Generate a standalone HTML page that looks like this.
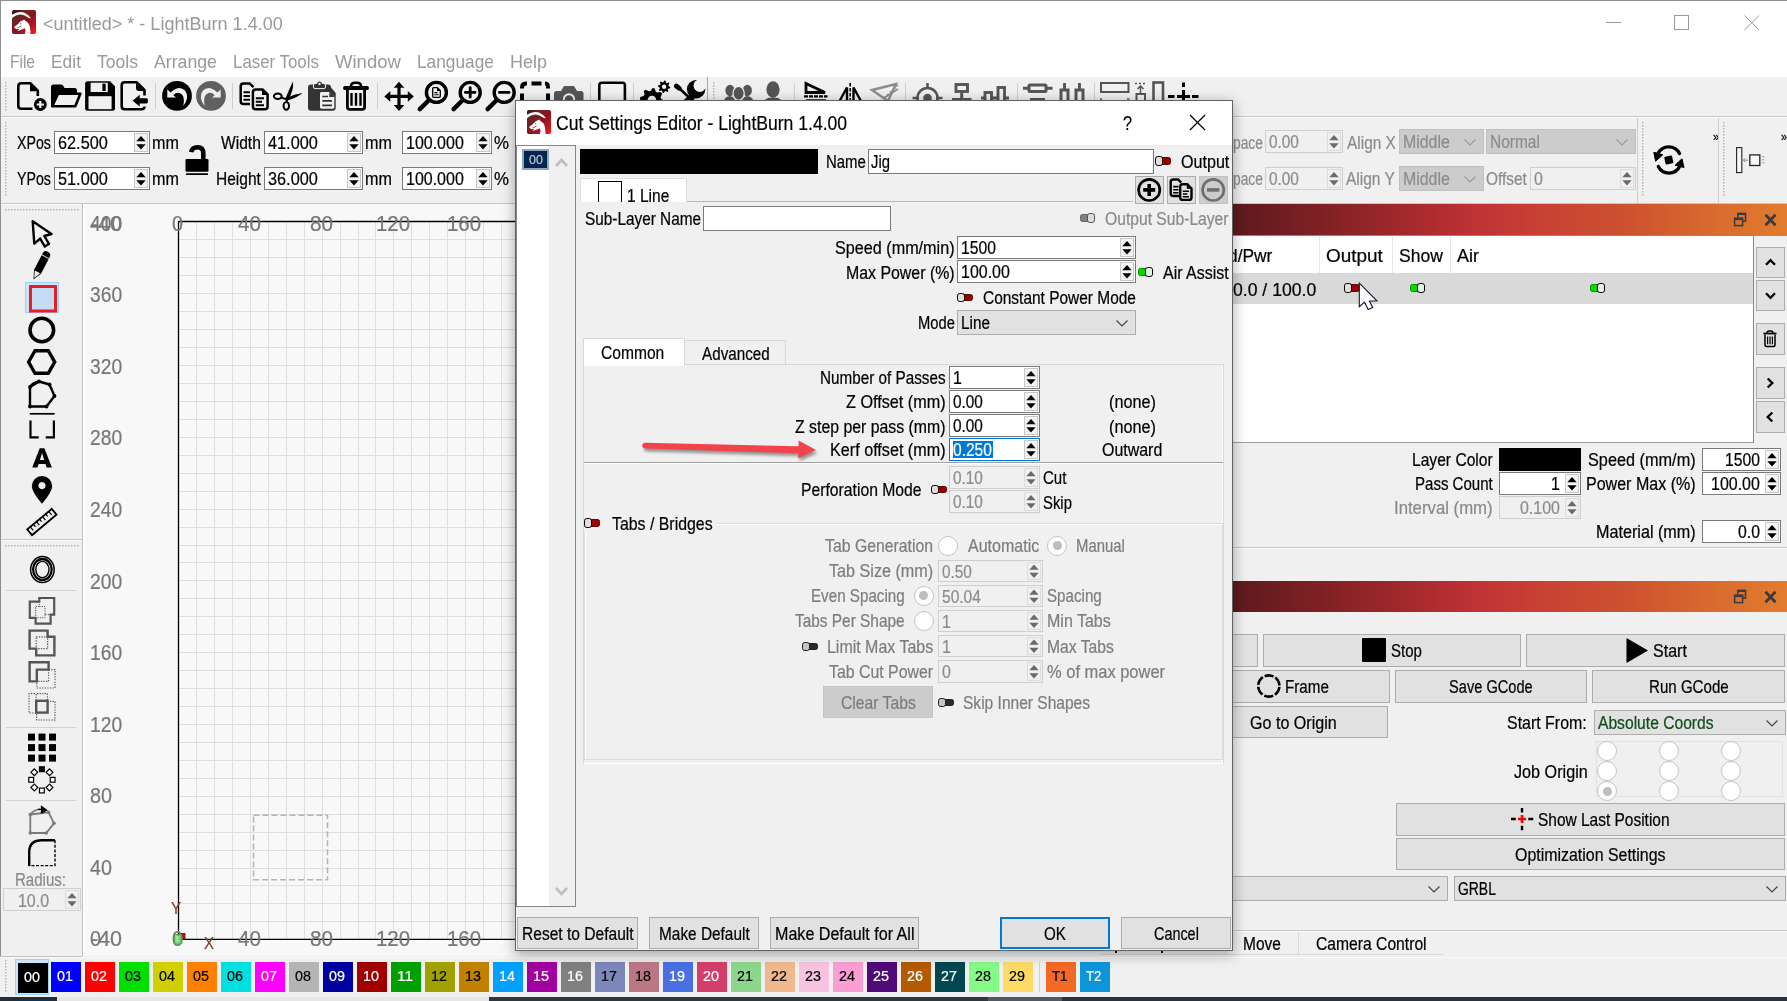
<!DOCTYPE html>
<html><head><meta charset="utf-8"><title>LightBurn</title>
<style>
html,body{margin:0;padding:0;}
body{width:1787px;height:1001px;overflow:hidden;background:#f0f0f0;position:relative;font-family:"Liberation Sans",sans-serif;}
#root{position:absolute;left:0;top:0;width:1787px;height:1001px;overflow:hidden;}
#root div,#root span,#root svg{position:absolute;}
.t{white-space:nowrap;transform-origin:0 50%;display:block;-webkit-text-stroke:0.22px currentColor;}
.a{overflow:visible;pointer-events:none;}
</style></head><body><div id="root">
<div style="left:0px;top:0px;width:1787px;height:77px;background:#fff;"></div>
<svg class="a" style="left:0;top:0" width="1787" height="1001" ><defs><linearGradient id="lg12_10" x1="0" y1="0" x2="1" y2="1"><stop offset="0" stop-color="#2c1212"/><stop offset="0.25" stop-color="#6a2426"/><stop offset="0.55" stop-color="#8c1420"/><stop offset="0.8" stop-color="#c4141f"/><stop offset="1" stop-color="#ff2028"/></linearGradient></defs><g transform="translate(12,10) scale(1.0)"><rect x="0" y="0" width="24" height="24" rx="1.8" fill="url(#lg12_10)"/><path d="M0,4.8 Q4,2 9,2.1 Q15,2.6 19,8.6 Q17,8.2 15.5,7.2 Q12,4.4 8,4.6 Q3,5 0,8.6 Z" fill="#fff"/><path d="M2,17 L6,14 L8.3,11.6 L12.3,9.4 L13.4,11 Q17,12.6 17.9,17 Q18.7,21 18.4,24 L12.8,24 Q14.2,21 13,18.3 L10,19.6 L5.2,21.2 L7.4,18.9 L4,19.2 Z" fill="#fff"/><path d="M5.5,18 L9.6,15.9" stroke="#8c1420" stroke-width="0.7"/><circle cx="8.7" cy="13.7" r="0.55" fill="#8c1420"/></g></svg>
<span class="t" style="left:43.0px;top:13.29px;font-size:17.99px;line-height:22px;color:#999999;transform:scaleX(1.0034);-webkit-text-stroke:0;">&lt;untitled&gt; * - LightBurn 1.4.00</span>
<svg class="a" style="left:0;top:0" width="1787" height="1001"><g stroke="#9a9a9a" stroke-width="1" fill="none"><line x1="1606" y1="22.5" x2="1621" y2="22.5"/><rect x="1674.5" y="15.5" width="14" height="14"/><line x1="1744.5" y1="15.5" x2="1759" y2="30"/><line x1="1759" y1="15.5" x2="1744.5" y2="30"/></g></svg>
<span class="t" style="left:10.0px;top:50.59px;font-size:17.99px;line-height:22px;color:#9a9a9a;transform:scaleX(0.8618);-webkit-text-stroke:0;">File</span>
<span class="t" style="left:51.0px;top:50.59px;font-size:17.99px;line-height:22px;color:#9a9a9a;transform:scaleX(0.9671);-webkit-text-stroke:0;">Edit</span>
<span class="t" style="left:97.0px;top:50.59px;font-size:17.99px;line-height:22px;color:#9a9a9a;transform:scaleX(0.9756);-webkit-text-stroke:0;">Tools</span>
<span class="t" style="left:154.0px;top:50.59px;font-size:17.99px;line-height:22px;color:#9a9a9a;transform:scaleX(0.9837);-webkit-text-stroke:0;">Arrange</span>
<span class="t" style="left:233.0px;top:50.59px;font-size:17.99px;line-height:22px;color:#9a9a9a;transform:scaleX(0.9375);-webkit-text-stroke:0;">Laser Tools</span>
<span class="t" style="left:335.0px;top:50.59px;font-size:17.99px;line-height:22px;color:#9a9a9a;transform:scaleX(1.0309);-webkit-text-stroke:0;">Window</span>
<span class="t" style="left:417.0px;top:50.59px;font-size:17.99px;line-height:22px;color:#9a9a9a;transform:scaleX(0.9614);-webkit-text-stroke:0;">Language</span>
<span class="t" style="left:510.0px;top:50.59px;font-size:17.99px;line-height:22px;color:#9a9a9a;transform:scaleX(0.9994);-webkit-text-stroke:0;">Help</span>
<div style="left:0px;top:77px;width:1787px;height:39px;background:#f0f0f0;"></div>
<div style="left:0px;top:116px;width:1787px;height:1px;background:#c6c6c6;"></div>
<div style="left:0px;top:117px;width:1787px;height:1px;background:#fbfbfb;"></div>
<div style="left:0px;top:203px;width:1787px;height:1px;background:#c6c6c6;"></div>
<div style="left:0px;top:204px;width:1787px;height:1px;background:#fbfbfb;"></div>
<svg class="a" style="left:0;top:0" width="1787" height="1001" ><rect x="5" y="82" width="1.5" height="1.5" fill="#b5b5b5"/><rect x="5" y="85" width="1.5" height="1.5" fill="#b5b5b5"/><rect x="5" y="88" width="1.5" height="1.5" fill="#b5b5b5"/><rect x="5" y="91" width="1.5" height="1.5" fill="#b5b5b5"/><rect x="5" y="94" width="1.5" height="1.5" fill="#b5b5b5"/><rect x="5" y="97" width="1.5" height="1.5" fill="#b5b5b5"/><rect x="5" y="100" width="1.5" height="1.5" fill="#b5b5b5"/><rect x="5" y="103" width="1.5" height="1.5" fill="#b5b5b5"/><rect x="5" y="106" width="1.5" height="1.5" fill="#b5b5b5"/><rect x="5" y="109" width="1.5" height="1.5" fill="#b5b5b5"/></svg>
<svg class="a" style="left:0;top:0" width="1787" height="1001" ><rect x="5" y="122" width="1.5" height="1.5" fill="#b5b5b5"/><rect x="5" y="125" width="1.5" height="1.5" fill="#b5b5b5"/><rect x="5" y="128" width="1.5" height="1.5" fill="#b5b5b5"/><rect x="5" y="131" width="1.5" height="1.5" fill="#b5b5b5"/><rect x="5" y="134" width="1.5" height="1.5" fill="#b5b5b5"/><rect x="5" y="137" width="1.5" height="1.5" fill="#b5b5b5"/><rect x="5" y="140" width="1.5" height="1.5" fill="#b5b5b5"/><rect x="5" y="143" width="1.5" height="1.5" fill="#b5b5b5"/><rect x="5" y="146" width="1.5" height="1.5" fill="#b5b5b5"/><rect x="5" y="149" width="1.5" height="1.5" fill="#b5b5b5"/><rect x="5" y="152" width="1.5" height="1.5" fill="#b5b5b5"/><rect x="5" y="155" width="1.5" height="1.5" fill="#b5b5b5"/><rect x="5" y="158" width="1.5" height="1.5" fill="#b5b5b5"/><rect x="5" y="161" width="1.5" height="1.5" fill="#b5b5b5"/><rect x="5" y="164" width="1.5" height="1.5" fill="#b5b5b5"/><rect x="5" y="167" width="1.5" height="1.5" fill="#b5b5b5"/><rect x="5" y="170" width="1.5" height="1.5" fill="#b5b5b5"/><rect x="5" y="173" width="1.5" height="1.5" fill="#b5b5b5"/><rect x="5" y="176" width="1.5" height="1.5" fill="#b5b5b5"/><rect x="5" y="179" width="1.5" height="1.5" fill="#b5b5b5"/><rect x="5" y="182" width="1.5" height="1.5" fill="#b5b5b5"/><rect x="5" y="185" width="1.5" height="1.5" fill="#b5b5b5"/><rect x="5" y="188" width="1.5" height="1.5" fill="#b5b5b5"/><rect x="5" y="191" width="1.5" height="1.5" fill="#b5b5b5"/><rect x="5" y="194" width="1.5" height="1.5" fill="#b5b5b5"/></svg>
<svg class="a" style="left:0;top:0" width="1787" height="1001" ><rect x="713" y="82" width="1.5" height="1.5" fill="#b5b5b5"/><rect x="713" y="85" width="1.5" height="1.5" fill="#b5b5b5"/><rect x="713" y="88" width="1.5" height="1.5" fill="#b5b5b5"/><rect x="713" y="91" width="1.5" height="1.5" fill="#b5b5b5"/><rect x="713" y="94" width="1.5" height="1.5" fill="#b5b5b5"/><rect x="713" y="97" width="1.5" height="1.5" fill="#b5b5b5"/><rect x="713" y="100" width="1.5" height="1.5" fill="#b5b5b5"/><rect x="713" y="103" width="1.5" height="1.5" fill="#b5b5b5"/><rect x="713" y="106" width="1.5" height="1.5" fill="#b5b5b5"/><rect x="713" y="109" width="1.5" height="1.5" fill="#b5b5b5"/></svg>
<svg class="a" style="left:0;top:0" width="1787" height="1001" ><path d="M32.5,108.7 H21.3 Q18.3,108.7 18.3,105.7 V86.3 Q18.3,83.3 21.3,83.3 H30.5 L37.8,90.6 V96" fill="none" stroke="#000" stroke-width="2.6" stroke-linejoin="round"/><path d="M30,83 L38.3,91.3 H30 Z" fill="#000"/><circle cx="40.3" cy="104.5" r="6.4" fill="#000"/><path d="M36.7,104.5 H43.9 M40.3,100.9 V108.1" stroke="#f0f0f0" stroke-width="2.2"/><path d="M51,87 Q51,84.5 53.5,84.5 H61 Q62.8,84.5 63.6,86.2 L64.5,88 H74.5 Q77,88 77,90.5 V94 H58 L52.5,106 H51 Z" fill="#000"/><path d="M58,93.7 H80.3 L75.3,106.3 H52.3 Z" fill="#f0f0f0" stroke="#000" stroke-width="2.6" stroke-linejoin="round"/><path d="M87.6,81.2 H110 L115,86.2 V108.3 Q115,110.8 112.5,110.8 H87.6 Q85.1,110.8 85.1,108.3 V83.7 Q85.1,81.2 87.6,81.2 Z" fill="#000"/><rect x="90.6" y="82.7" width="17.2" height="9.3" fill="#f0f0f0"/><rect x="102.4" y="83.6" width="3.3" height="7.4" fill="#000"/><rect x="88.5" y="96.2" width="23.1" height="13" fill="#f0f0f0"/><path d="M144.5,106.5 Q144.5,109.3 141.5,109.3 H124.7 Q121.7,109.3 121.7,106.3 V85.3 Q121.7,82.3 124.7,82.3 H136.5 L144.5,90 V95.5" fill="none" stroke="#000" stroke-width="2.6" stroke-linejoin="round"/><path d="M136,82 L145.3,91 H139 Q136,91 136,88 Z" fill="#000"/><path d="M132.6,100.8 L139.7,94.8 V98.2 H146.5 Q147.9,98.2 147.9,99.6 V102 Q147.9,103.4 146.5,103.4 H139.7 V106.6 Z" fill="#000"/><circle cx="177" cy="95.9" r="14.9" fill="#000"/><path d="M167.3,89.6 V97.6 H176 L173.3,95.3 Q176,92.3 179.5,93 Q185.5,94.5 183.3,106 Q190,97 185,90.5 Q179,84.5 170.6,92.6 Z" fill="#f0f0f0"/><circle cx="211" cy="95.9" r="14.9" fill="#606060"/><path d="M220.7,89.6 V97.6 H212 L214.7,95.3 Q212,92.3 208.5,93 Q202.5,94.5 204.7,106 Q198,97 203,90.5 Q209,84.5 217.4,92.6 Z" fill="#ededed"/><path d="M250,104 H243.5 Q240.7,104 240.7,101.2 V86.2 Q240.7,83.4 243.5,83.4 H249.5 L253.5,87.2" fill="none" stroke="#000" stroke-width="2.5" stroke-linejoin="round"/><path d="M243.5,92.2 H250 M243.5,96 H250 M243.5,99.8 H250" stroke="#000" stroke-width="1.9"/><path d="M255.7,89.4 H262.5 L267.6,94.4 V106.4 Q267.6,109.2 264.8,109.2 H255.7 Q252.9,109.2 252.9,106.4 V92.2 Q252.9,89.4 255.7,89.4 Z" fill="#f0f0f0" stroke="#000" stroke-width="2.5" stroke-linejoin="round"/><path d="M262,89 L268,95 H262 Z" fill="#000"/><path d="M255.8,98.3 H264 M255.8,101.8 H262 M255.8,105.3 H264" stroke="#000" stroke-width="1.9"/><path d="M285,99.5 Q289,90 292.8,81.6 Q294.5,90 287.8,100.5 Z" fill="#000"/><path d="M286,98.3 Q294,94 302.8,93 Q297,97.5 287.5,100.5 Z" fill="#000"/><ellipse cx="277.8" cy="96.3" rx="3.9" ry="2.7" fill="none" stroke="#000" stroke-width="2"/><ellipse cx="286.3" cy="105.9" rx="2.7" ry="3.9" fill="none" stroke="#000" stroke-width="2"/><path d="M281,97.5 L286.5,99.3 L286.8,102" fill="none" stroke="#000" stroke-width="2"/><path d="M311,84.4 H328 Q331,84.4 331,87.4 L335.7,93 V107.8 Q335.7,110.8 332.7,110.8 H311 Q308,110.8 308,107.8 V87.4 Q308,84.4 311,84.4 Z" fill="#333"/><path d="M313.5,85 Q313.5,83.5 315,83.5 H316.6 Q317,81 319.5,81 Q322,81 322.4,83.5 H324 Q325.5,83.5 325.5,85 V87 Q325.5,88.6 324,88.6 H315 Q313.5,88.6 313.5,87 Z" fill="#333" stroke="#f0f0f0" stroke-width="1"/><circle cx="319.5" cy="83.9" r="1.2" fill="#f0f0f0"/><path d="M321.5,92 H329.5 L334.3,96.8 V107.3 Q334.3,108.7 332.9,108.7 H321.5 Q320,108.7 320,107.3 V93.4 Q320,92 321.5,92 Z" fill="#f0f0f0"/><path d="M329.3,91.8 L334.5,97 H329.3 Z" fill="#333"/><path d="M322.3,96.5 H328 M322.3,100.9 H332 M322.3,105.3 H332" stroke="#333" stroke-width="1.7"/><path d="M350.8,86.5 Q351,82.7 355,82.7 H357 Q361,82.7 361.2,86.5" fill="none" stroke="#000" stroke-width="2.5"/><rect x="343.2" y="86" width="25.6" height="4" rx="1.5" fill="#000"/><path d="M347.4,90 V107 Q347.4,109.4 349.8,109.4 H362.2 Q364.6,109.4 364.6,107 V90" fill="none" stroke="#000" stroke-width="2.8"/><path d="M351.5,93 V105.8 M356,93 V105.8 M360.5,93 V105.8" stroke="#000" stroke-width="2.4"/><path d="M399,84 V109 M386.5,96.4 H411.5" stroke="#000" stroke-width="3.2"/><path d="M399,81.8 L404.3,87.8 H393.7 Z M399,111 L404.3,105 H393.7 Z M384.3,96.4 L390.3,91.1 V101.7 Z M413.8,96.4 L407.8,91.1 V101.7 Z" fill="#000"/><circle cx="436.4" cy="92.4" r="10" fill="none" stroke="#000" stroke-width="3.4"/><path d="M428.79999999999995,100.2 L419.79999999999995,109.10000000000001" stroke="#000" stroke-width="4.4" stroke-linecap="round"/><circle cx="470.2" cy="92.4" r="10" fill="none" stroke="#000" stroke-width="3.4"/><path d="M462.59999999999997,100.2 L453.59999999999997,109.10000000000001" stroke="#000" stroke-width="4.4" stroke-linecap="round"/><circle cx="504.2" cy="92.4" r="10" fill="none" stroke="#000" stroke-width="3.4"/><path d="M496.59999999999997,100.2 L487.59999999999997,109.10000000000001" stroke="#000" stroke-width="4.4" stroke-linecap="round"/><path d="M433.7,87.6 H437.3 L440.3,90.6 V96.3 Q440.3,97.3 439.3,97.3 H433.7 Q432.7,97.3 432.7,96.3 V88.6 Q432.7,87.6 433.7,87.6 Z" fill="none" stroke="#000" stroke-width="1.3"/><path d="M437,87.3 L440.6,90.9 H437 Z" fill="#000"/><path d="M434.3,92.6 H437.5 M434.3,94.8 H438.7" stroke="#000" stroke-width="1.1"/><path d="M465.4,92.4 H475 M470.2,87.6 V97.2" stroke="#000" stroke-width="2.8" stroke-linecap="round"/><path d="M499.4,92.4 H509" stroke="#000" stroke-width="2.8" stroke-linecap="round"/><path d="M522,88.5 V87.5 Q522,83.5 526,83.5 H527 M531.5,83.5 H541.5 M545,83.5 H545.5 Q548,83.5 548,87.5 V88.5 M522,93.5 V104 M548,93.5 V104" fill="none" stroke="#000" stroke-width="4"/><path d="M556.5,91 H561 L564,86 H574 L577,91 H581 Q583.5,91 583.5,93.5 V108 H554 V93.5 Q554,91 556.5,91 Z" fill="#555"/><circle cx="569" cy="99.5" r="5.2" fill="#555" stroke="#f0f0f0" stroke-width="2"/><rect x="599.3" y="82.8" width="25.6" height="24" rx="2.5" fill="none" stroke="#000" stroke-width="2.6"/><polygon points="663.9,100.6 663.5,102.9 660.2,103.9 659.3,105.5 660.0,108.9 658.1,110.3 655.0,108.7 653.2,109.1 651.3,112.0 649.0,111.6 648.0,108.3 646.4,107.4 643.0,108.1 641.6,106.2 643.2,103.1 642.8,101.3 639.9,99.4 640.3,97.1 643.6,96.1 644.5,94.5 643.8,91.1 645.7,89.7 648.8,91.3 650.6,90.9 652.5,88.0 654.8,88.4 655.8,91.7 657.4,92.6 660.8,91.9 662.2,93.8 660.6,96.9 661.0,98.7" fill="#000"/><circle cx="651.9" cy="100" r="4.3" fill="#f0f0f0"/><polygon points="670.3,87.1 670.1,88.3 668.2,88.7 667.7,89.5 668.3,91.4 667.3,92.1 665.6,91.0 664.8,91.3 663.8,93.0 662.6,92.8 662.2,90.9 661.4,90.4 659.5,91.0 658.8,90.0 659.9,88.3 659.6,87.5 657.9,86.5 658.1,85.3 660.0,84.9 660.5,84.1 659.9,82.2 660.9,81.5 662.6,82.6 663.4,82.3 664.4,80.6 665.6,80.8 666.0,82.7 666.8,83.2 668.7,82.6 669.4,83.6 668.3,85.3 668.6,86.1" fill="#000"/><circle cx="664.1" cy="86.8" r="2.2" fill="#f0f0f0"/><path d="M676.3,86 L679.3,88.3" stroke="#000" stroke-width="4.8" stroke-linecap="round"/><path d="M679,88 L696,104" stroke="#000" stroke-width="2.6"/><circle cx="696.1" cy="89.3" r="9.2" fill="#000"/><circle cx="699.8" cy="85.6" r="6.3" fill="#f2f2f2"/><path d="M692.5,96.5 L680,108" stroke="#000" stroke-width="6.5"/><ellipse cx="730" cy="90.5" rx="4.6" ry="5.8" fill="#555"/><ellipse cx="747.3" cy="90.5" rx="4.6" ry="5.8" fill="#555"/><path d="M723.2,104 Q723.5,96.5 730,96 Q735,96.5 736,104 Z M741,104 Q742,96.5 747.3,96 Q753.5,96.5 754,104 Z" fill="#555"/><ellipse cx="738.6" cy="93.3" rx="5.6" ry="7" fill="#555" stroke="#f0f0f0" stroke-width="1.3"/><path d="M729.5,106 Q730.5,100 738.6,100 Q746.5,100 747.7,106 Z" fill="#555"/><ellipse cx="773" cy="89.5" rx="6.6" ry="8.2" fill="#555"/><path d="M762,106 Q763,97 773,97.5 Q783,97 784,106 Z" fill="#555"/><path d="M806,83.5 L825,92.5 H806 Z" fill="none" stroke="#000" stroke-width="2.8" stroke-linejoin="miter"/><path d="M804,96.3 H827.5" stroke="#000" stroke-width="2.2" stroke-dasharray="4,1"/><path d="M806,100.5 H826" stroke="#000" stroke-width="2.4"/><path d="M847,87.5 V103 H838.5 Z" fill="none" stroke="#000" stroke-width="2.4"/><path d="M853.5,87.5 V103 H862 Z" fill="none" stroke="#000" stroke-width="2.4"/><path d="M850.2,83 V103" stroke="#000" stroke-width="1.6" stroke-dasharray="3.5,1.5"/><path d="M872,90 L896,84 L888,101 Z" fill="none" stroke="#8c8c8c" stroke-width="2.4"/><path d="M880,102 L898,85" stroke="#8c8c8c" stroke-width="1.5" stroke-dasharray="3,1.5"/><path d="M884,98 L898,89" stroke="#8c8c8c" stroke-width="1.5"/><circle cx="927.5" cy="98" r="10" fill="none" stroke="#555" stroke-width="2.6"/><circle cx="927.5" cy="98" r="4.3" fill="#555"/><path d="M927.5,83 V89 M912.5,98 H918.5 M936.5,98 H942.5" stroke="#555" stroke-width="2.6"/><rect x="956" y="84.5" width="11.5" height="7" fill="none" stroke="#555" stroke-width="2.9"/><path d="M961.7,92 V99 M952,99.5 H971.5" stroke="#555" stroke-width="3"/><rect x="985" y="92.5" width="6.5" height="10" fill="none" stroke="#555" stroke-width="2.9"/><rect x="998" y="87.5" width="6.5" height="15" fill="none" stroke="#555" stroke-width="2.9"/><path d="M981,98 H985 M991.5,98 H998 M1004.5,98 H1009" stroke="#555" stroke-width="2.9"/><rect x="1029" y="85" width="17" height="6.5" rx="1" fill="none" stroke="#555" stroke-width="3"/><path d="M1023,88.3 H1029 M1046,88.3 H1052.5" stroke="#555" stroke-width="2.9"/><path d="M1030,99.5 H1045" stroke="#555" stroke-width="3"/><rect x="1061" y="90" width="7" height="12" fill="none" stroke="#555" stroke-width="3"/><rect x="1076" y="90" width="7" height="12" fill="none" stroke="#555" stroke-width="3"/><path d="M1064.5,83 V90 M1079.5,83 V90" stroke="#555" stroke-width="2.9"/><rect x="1101" y="83" width="27.5" height="9" fill="none" stroke="#555" stroke-width="2"/><path d="M1100,99 H1102 M1127,99 H1129.5" stroke="#555" stroke-width="1.6"/><path d="M1135,83.5 H1146" stroke="#555" stroke-width="1.4" stroke-dasharray="2,2"/><path d="M1140.5,86 V93 M1137.5,89 L1140.5,86 L1143.5,89" fill="none" stroke="#555" stroke-width="1.5"/><rect x="1136.5" y="94" width="8.5" height="7" fill="none" stroke="#555" stroke-width="2"/><rect x="1153.5" y="82.5" width="9.5" height="20" fill="none" stroke="#555" stroke-width="2.6"/><path d="M1168,96.5 H1174.5 M1177,96.5 H1190 M1192,96.5 H1198.5 M1183.5,82.5 V87 M1183.5,90 V102" stroke="#000" stroke-width="3"/></svg>
<div style="left:155px;top:83px;width:1px;height:26px;background:#cfcfcf;"></div>
<div style="left:232px;top:83px;width:1px;height:26px;background:#cfcfcf;"></div>
<div style="left:377px;top:83px;width:1px;height:26px;background:#cfcfcf;"></div>
<div style="left:590px;top:83px;width:1px;height:26px;background:#cfcfcf;"></div>
<div style="left:633px;top:83px;width:1px;height:26px;background:#cfcfcf;"></div>
<div style="left:794px;top:83px;width:1px;height:26px;background:#cfcfcf;"></div>
<div style="left:905px;top:83px;width:1px;height:26px;background:#cfcfcf;"></div>
<div style="left:1017px;top:83px;width:1px;height:26px;background:#cfcfcf;"></div>
<div style="left:1094px;top:83px;width:1px;height:26px;background:#cfcfcf;"></div>
<div style="left:707px;top:77px;width:1px;height:39px;background:#a8a8a8;"></div>
<span class="t" style="left:17.0px;top:132.30px;font-size:17.44px;line-height:22px;color:#000;transform:scaleX(0.8129);">XPos</span>
<div style="left:54px;top:131px;width:96px;height:23px;background:#fff;border:1px solid #7a7a7a;box-sizing:border-box;"></div>
<div style="left:134px;top:133px;width:14px;height:19px;background:#f3f3f3;border:1px solid #c8c8c8;box-sizing:border-box;"></div>
<svg class="a" style="left:0;top:0" width="1787" height="1001"><polygon points="136.3,141.2 145.7,141.2 141.0,135.89999999999998" fill="#000"/><polygon points="136.3,144.2 145.7,144.2 141.0,149.5" fill="#000"/></svg>
<span class="t" style="left:58.0px;top:132.30px;font-size:17.44px;line-height:22px;color:#000;transform:scaleX(0.9340);">62.500</span>
<span class="t" style="left:152.0px;top:132.30px;font-size:17.44px;line-height:22px;color:#000;transform:scaleX(0.9260);">mm</span>
<span class="t" style="left:17.0px;top:168.30px;font-size:17.44px;line-height:22px;color:#000;transform:scaleX(0.8129);">YPos</span>
<div style="left:54px;top:167px;width:96px;height:23px;background:#fff;border:1px solid #7a7a7a;box-sizing:border-box;"></div>
<div style="left:134px;top:169px;width:14px;height:19px;background:#f3f3f3;border:1px solid #c8c8c8;box-sizing:border-box;"></div>
<svg class="a" style="left:0;top:0" width="1787" height="1001"><polygon points="136.3,177.2 145.7,177.2 141.0,171.89999999999998" fill="#000"/><polygon points="136.3,180.2 145.7,180.2 141.0,185.5" fill="#000"/></svg>
<span class="t" style="left:58.0px;top:168.30px;font-size:17.44px;line-height:22px;color:#000;transform:scaleX(0.9340);">51.000</span>
<span class="t" style="left:152.0px;top:168.30px;font-size:17.44px;line-height:22px;color:#000;transform:scaleX(0.9260);">mm</span>
<svg class="a" style="left:0;top:0" width="1787" height="1001" ><rect x="185.5" y="159" width="23" height="12.7" rx="1.2" fill="#000"/><rect x="186" y="173.3" width="22" height="1.7" rx="0.6" fill="#000"/><path d="M191.2,152.2 Q192,147.3 197.5,147.3 Q203.3,147.3 203.3,153.3 V160" fill="none" stroke="#000" stroke-width="4.6"/></svg>
<span class="t" style="left:221.0px;top:132.30px;font-size:17.44px;line-height:22px;color:#000;transform:scaleX(0.8942);">Width</span>
<div style="left:264px;top:131px;width:99px;height:23px;background:#fff;border:1px solid #7a7a7a;box-sizing:border-box;"></div>
<div style="left:347px;top:133px;width:14px;height:19px;background:#f3f3f3;border:1px solid #c8c8c8;box-sizing:border-box;"></div>
<svg class="a" style="left:0;top:0" width="1787" height="1001"><polygon points="349.3,141.2 358.7,141.2 354.0,135.89999999999998" fill="#000"/><polygon points="349.3,144.2 358.7,144.2 354.0,149.5" fill="#000"/></svg>
<span class="t" style="left:268.0px;top:132.30px;font-size:17.44px;line-height:22px;color:#000;transform:scaleX(0.9340);">41.000</span>
<span class="t" style="left:365.0px;top:132.30px;font-size:17.44px;line-height:22px;color:#000;transform:scaleX(0.9260);">mm</span>
<div style="left:402px;top:131px;width:90px;height:23px;background:#fff;border:1px solid #7a7a7a;box-sizing:border-box;"></div>
<div style="left:476px;top:133px;width:14px;height:19px;background:#f3f3f3;border:1px solid #c8c8c8;box-sizing:border-box;"></div>
<svg class="a" style="left:0;top:0" width="1787" height="1001"><polygon points="478.3,141.2 487.7,141.2 483.0,135.89999999999998" fill="#000"/><polygon points="478.3,144.2 487.7,144.2 483.0,149.5" fill="#000"/></svg>
<span class="t" style="left:406.0px;top:132.30px;font-size:17.44px;line-height:22px;color:#000;transform:scaleX(0.9167);">100.000</span>
<span class="t" style="left:494.0px;top:132.30px;font-size:17.44px;line-height:22px;color:#000;transform:scaleX(0.9641);">%</span>
<span class="t" style="left:216.0px;top:168.30px;font-size:17.44px;line-height:22px;color:#000;transform:scaleX(0.8895);">Height</span>
<div style="left:264px;top:167px;width:99px;height:23px;background:#fff;border:1px solid #7a7a7a;box-sizing:border-box;"></div>
<div style="left:347px;top:169px;width:14px;height:19px;background:#f3f3f3;border:1px solid #c8c8c8;box-sizing:border-box;"></div>
<svg class="a" style="left:0;top:0" width="1787" height="1001"><polygon points="349.3,177.2 358.7,177.2 354.0,171.89999999999998" fill="#000"/><polygon points="349.3,180.2 358.7,180.2 354.0,185.5" fill="#000"/></svg>
<span class="t" style="left:268.0px;top:168.30px;font-size:17.44px;line-height:22px;color:#000;transform:scaleX(0.9340);">36.000</span>
<span class="t" style="left:365.0px;top:168.30px;font-size:17.44px;line-height:22px;color:#000;transform:scaleX(0.9260);">mm</span>
<div style="left:402px;top:167px;width:90px;height:23px;background:#fff;border:1px solid #7a7a7a;box-sizing:border-box;"></div>
<div style="left:476px;top:169px;width:14px;height:19px;background:#f3f3f3;border:1px solid #c8c8c8;box-sizing:border-box;"></div>
<svg class="a" style="left:0;top:0" width="1787" height="1001"><polygon points="478.3,177.2 487.7,177.2 483.0,171.89999999999998" fill="#000"/><polygon points="478.3,180.2 487.7,180.2 483.0,185.5" fill="#000"/></svg>
<span class="t" style="left:406.0px;top:168.30px;font-size:17.44px;line-height:22px;color:#000;transform:scaleX(0.9167);">100.000</span>
<span class="t" style="left:494.0px;top:168.30px;font-size:17.44px;line-height:22px;color:#000;transform:scaleX(0.9641);">%</span>
<span class="t" style="left:1232.5px;top:132.30px;font-size:17.44px;line-height:22px;color:#8c8c8c;transform:scaleX(0.7904);">pace</span>
<div style="left:1265px;top:130px;width:78px;height:23px;background:#f0f0f0;border:1px solid #cfcfcf;box-sizing:border-box;"></div>
<div style="left:1327px;top:132px;width:14px;height:19px;background:#f0f0f0;border:1px solid #dcdcdc;box-sizing:border-box;"></div>
<svg class="a" style="left:0;top:0" width="1787" height="1001"><polygon points="1329.3,140.2 1338.7,140.2 1334.0,134.89999999999998" fill="#6a6a6a"/><polygon points="1329.3,143.2 1338.7,143.2 1334.0,148.5" fill="#6a6a6a"/></svg>
<span class="t" style="left:1269.0px;top:131.30px;font-size:17.44px;line-height:22px;color:#8c8c8c;transform:scaleX(0.8806);">0.00</span>
<span class="t" style="left:1347.0px;top:132.30px;font-size:17.44px;line-height:22px;color:#8c8c8c;transform:scaleX(0.8837);">Align X</span>
<div style="left:1399px;top:129px;width:85px;height:25px;background:#cccccc;border:1px solid #c0c0c0;box-sizing:border-box;"></div>
<span class="t" style="left:1403.0px;top:131.30px;font-size:17.44px;line-height:22px;color:#8c8c8c;transform:scaleX(0.9117);">Middle</span>
<svg class="a" style="left:1463px;top:136.5px" width="14" height="10"><polyline points="1.5,2.5 7,8 12.5,2.5" fill="none" stroke="#9a9a9a" stroke-width="1.2"/></svg>
<div style="left:1486px;top:129px;width:150px;height:25px;background:#cccccc;border:1px solid #c0c0c0;box-sizing:border-box;"></div>
<span class="t" style="left:1490.0px;top:131.30px;font-size:17.44px;line-height:22px;color:#8c8c8c;transform:scaleX(0.8865);">Normal</span>
<svg class="a" style="left:1615px;top:136.5px" width="14" height="10"><polyline points="1.5,2.5 7,8 12.5,2.5" fill="none" stroke="#9a9a9a" stroke-width="1.2"/></svg>
<span class="t" style="left:1232.5px;top:168.30px;font-size:17.44px;line-height:22px;color:#8c8c8c;transform:scaleX(0.7904);">pace</span>
<div style="left:1265px;top:167px;width:78px;height:23px;background:#f0f0f0;border:1px solid #cfcfcf;box-sizing:border-box;"></div>
<div style="left:1327px;top:169px;width:14px;height:19px;background:#f0f0f0;border:1px solid #dcdcdc;box-sizing:border-box;"></div>
<svg class="a" style="left:0;top:0" width="1787" height="1001"><polygon points="1329.3,177.2 1338.7,177.2 1334.0,171.89999999999998" fill="#6a6a6a"/><polygon points="1329.3,180.2 1338.7,180.2 1334.0,185.5" fill="#6a6a6a"/></svg>
<span class="t" style="left:1269.0px;top:168.30px;font-size:17.44px;line-height:22px;color:#8c8c8c;transform:scaleX(0.8806);">0.00</span>
<span class="t" style="left:1346.0px;top:168.30px;font-size:17.44px;line-height:22px;color:#8c8c8c;transform:scaleX(0.8888);">Align Y</span>
<div style="left:1399px;top:166px;width:85px;height:25px;background:#cccccc;border:1px solid #c0c0c0;box-sizing:border-box;"></div>
<span class="t" style="left:1403.0px;top:168.30px;font-size:17.44px;line-height:22px;color:#8c8c8c;transform:scaleX(0.9117);">Middle</span>
<svg class="a" style="left:1463px;top:173.5px" width="14" height="10"><polyline points="1.5,2.5 7,8 12.5,2.5" fill="none" stroke="#9a9a9a" stroke-width="1.2"/></svg>
<span class="t" style="left:1486.0px;top:168.30px;font-size:17.44px;line-height:22px;color:#8c8c8c;transform:scaleX(0.8842);">Offset</span>
<div style="left:1530px;top:167px;width:106px;height:23px;background:#f0f0f0;border:1px solid #cfcfcf;box-sizing:border-box;"></div>
<div style="left:1620px;top:169px;width:14px;height:19px;background:#f0f0f0;border:1px solid #dcdcdc;box-sizing:border-box;"></div>
<svg class="a" style="left:0;top:0" width="1787" height="1001"><polygon points="1622.3,177.2 1631.7,177.2 1627.0,171.89999999999998" fill="#6a6a6a"/><polygon points="1622.3,180.2 1631.7,180.2 1627.0,185.5" fill="#6a6a6a"/></svg>
<span class="t" style="left:1534.0px;top:168.30px;font-size:17.44px;line-height:22px;color:#8c8c8c;transform:scaleX(0.9141);">0</span>
<div style="left:1637px;top:118px;width:1px;height:85px;background:#cfcfcf;"></div>
<svg class="a" style="left:0;top:0" width="1787" height="1001" ><rect x="1642" y="122" width="1.5" height="1.5" fill="#b5b5b5"/><rect x="1642" y="125" width="1.5" height="1.5" fill="#b5b5b5"/><rect x="1642" y="128" width="1.5" height="1.5" fill="#b5b5b5"/><rect x="1642" y="131" width="1.5" height="1.5" fill="#b5b5b5"/><rect x="1642" y="134" width="1.5" height="1.5" fill="#b5b5b5"/><rect x="1642" y="137" width="1.5" height="1.5" fill="#b5b5b5"/><rect x="1642" y="140" width="1.5" height="1.5" fill="#b5b5b5"/><rect x="1642" y="143" width="1.5" height="1.5" fill="#b5b5b5"/><rect x="1642" y="146" width="1.5" height="1.5" fill="#b5b5b5"/><rect x="1642" y="149" width="1.5" height="1.5" fill="#b5b5b5"/><rect x="1642" y="152" width="1.5" height="1.5" fill="#b5b5b5"/><rect x="1642" y="155" width="1.5" height="1.5" fill="#b5b5b5"/><rect x="1642" y="158" width="1.5" height="1.5" fill="#b5b5b5"/><rect x="1642" y="161" width="1.5" height="1.5" fill="#b5b5b5"/><rect x="1642" y="164" width="1.5" height="1.5" fill="#b5b5b5"/><rect x="1642" y="167" width="1.5" height="1.5" fill="#b5b5b5"/><rect x="1642" y="170" width="1.5" height="1.5" fill="#b5b5b5"/><rect x="1642" y="173" width="1.5" height="1.5" fill="#b5b5b5"/><rect x="1642" y="176" width="1.5" height="1.5" fill="#b5b5b5"/><rect x="1642" y="179" width="1.5" height="1.5" fill="#b5b5b5"/><rect x="1642" y="182" width="1.5" height="1.5" fill="#b5b5b5"/><rect x="1642" y="185" width="1.5" height="1.5" fill="#b5b5b5"/><rect x="1642" y="188" width="1.5" height="1.5" fill="#b5b5b5"/><rect x="1642" y="191" width="1.5" height="1.5" fill="#b5b5b5"/><rect x="1642" y="194" width="1.5" height="1.5" fill="#b5b5b5"/></svg>
<svg class="a" style="left:0;top:0" width="1787" height="1001" ><path d="M1658,153.5 A12,12 0 0 1 1679.5,153.5" fill="none" stroke="#000" stroke-width="3.3" stroke-linecap="round"/><path d="M1653.8,152.3 L1662.8,154.8 L1655.6,161.2 Z" fill="#000" stroke="#000" stroke-width="1" stroke-linejoin="round"/><path d="M1658.3,166.5 A12,12 0 0 0 1679.8,166.3" fill="none" stroke="#000" stroke-width="3.3" stroke-linecap="round"/><path d="M1684,167.5 L1675,165.2 L1682,158.8 Z" fill="#000" stroke="#000" stroke-width="1" stroke-linejoin="round"/><rect x="-4" y="-4" width="8" height="8" rx="1.2" transform="translate(1668.8,160) rotate(-12)" fill="#000"/></svg>
<span class="t" style="left:1713.0px;top:129.43px;font-size:13.08px;line-height:16px;color:#000;transform:scaleX(0.8298);">»</span>
<div style="left:1718px;top:118px;width:1px;height:85px;background:#cfcfcf;"></div>
<svg class="a" style="left:0;top:0" width="1787" height="1001" ><rect x="1723" y="122" width="1.5" height="1.5" fill="#b5b5b5"/><rect x="1723" y="125" width="1.5" height="1.5" fill="#b5b5b5"/><rect x="1723" y="128" width="1.5" height="1.5" fill="#b5b5b5"/><rect x="1723" y="131" width="1.5" height="1.5" fill="#b5b5b5"/><rect x="1723" y="134" width="1.5" height="1.5" fill="#b5b5b5"/><rect x="1723" y="137" width="1.5" height="1.5" fill="#b5b5b5"/><rect x="1723" y="140" width="1.5" height="1.5" fill="#b5b5b5"/><rect x="1723" y="143" width="1.5" height="1.5" fill="#b5b5b5"/><rect x="1723" y="146" width="1.5" height="1.5" fill="#b5b5b5"/><rect x="1723" y="149" width="1.5" height="1.5" fill="#b5b5b5"/><rect x="1723" y="152" width="1.5" height="1.5" fill="#b5b5b5"/><rect x="1723" y="155" width="1.5" height="1.5" fill="#b5b5b5"/><rect x="1723" y="158" width="1.5" height="1.5" fill="#b5b5b5"/><rect x="1723" y="161" width="1.5" height="1.5" fill="#b5b5b5"/><rect x="1723" y="164" width="1.5" height="1.5" fill="#b5b5b5"/><rect x="1723" y="167" width="1.5" height="1.5" fill="#b5b5b5"/><rect x="1723" y="170" width="1.5" height="1.5" fill="#b5b5b5"/><rect x="1723" y="173" width="1.5" height="1.5" fill="#b5b5b5"/><rect x="1723" y="176" width="1.5" height="1.5" fill="#b5b5b5"/><rect x="1723" y="179" width="1.5" height="1.5" fill="#b5b5b5"/><rect x="1723" y="182" width="1.5" height="1.5" fill="#b5b5b5"/><rect x="1723" y="185" width="1.5" height="1.5" fill="#b5b5b5"/><rect x="1723" y="188" width="1.5" height="1.5" fill="#b5b5b5"/><rect x="1723" y="191" width="1.5" height="1.5" fill="#b5b5b5"/><rect x="1723" y="194" width="1.5" height="1.5" fill="#b5b5b5"/></svg>
<svg class="a" style="left:0;top:0" width="1787" height="1001" ><rect x="1736.6" y="147.6" width="5.2" height="25" fill="#f6f6f6" stroke="#222" stroke-width="1.1"/><rect x="1749.8" y="154.9" width="10" height="10.6" fill="#f6f6f6" stroke="#222" stroke-width="1.3"/><path d="M1743.3,160.2 H1748 M1745.2,158.3 L1743.3,160.2 L1745.2,162.1" fill="none" stroke="#777" stroke-width="0.8"/><path d="M1761.5,157 q1.5,-1 3,0 M1761.5,160 q1.5,-1 3,0 M1761.5,163 q1.5,-1 3,0" fill="none" stroke="#888" stroke-width="0.7"/></svg>
<span class="t" style="left:1781.0px;top:129.43px;font-size:13.08px;line-height:16px;color:#000;transform:scaleX(0.8298);">»</span>
<div style="left:0px;top:0px;width:1px;height:1001px;background:#8f8f8f;"></div>
<div style="left:0px;top:0px;width:1787px;height:1px;background:#8f8f8f;"></div>
<div style="left:82px;top:204px;width:438px;height:752px;background:#f8f8f8;"></div>
<div style="left:82px;top:204px;width:1px;height:752px;background:#c0c0c0;"></div>
<div style="left:83px;top:204px;width:2px;height:752px;background:#fdfdfd;"></div>
<svg class="a" style="left:0;top:0" width="1787" height="1001"><g stroke="#dfdfdf" stroke-width="1" shape-rendering="crispEdges"><line x1="196.5" y1="222" x2="196.5" y2="939"/><line x1="214.5" y1="222" x2="214.5" y2="939"/><line x1="232.5" y1="222" x2="232.5" y2="939"/><line x1="250.5" y1="222" x2="250.5" y2="939"/><line x1="268.5" y1="222" x2="268.5" y2="939"/><line x1="286.5" y1="222" x2="286.5" y2="939"/><line x1="304.5" y1="222" x2="304.5" y2="939"/><line x1="322.5" y1="222" x2="322.5" y2="939"/><line x1="340.5" y1="222" x2="340.5" y2="939"/><line x1="358.5" y1="222" x2="358.5" y2="939"/><line x1="375.5" y1="222" x2="375.5" y2="939"/><line x1="393.5" y1="222" x2="393.5" y2="939"/><line x1="411.5" y1="222" x2="411.5" y2="939"/><line x1="429.5" y1="222" x2="429.5" y2="939"/><line x1="447.5" y1="222" x2="447.5" y2="939"/><line x1="465.5" y1="222" x2="465.5" y2="939"/><line x1="483.5" y1="222" x2="483.5" y2="939"/><line x1="501.5" y1="222" x2="501.5" y2="939"/><line x1="519.5" y1="222" x2="519.5" y2="939"/><line x1="179" y1="239.5" x2="520" y2="239.5"/><line x1="179" y1="257.5" x2="520" y2="257.5"/><line x1="179" y1="275.5" x2="520" y2="275.5"/><line x1="179" y1="293.5" x2="520" y2="293.5"/><line x1="179" y1="311.5" x2="520" y2="311.5"/><line x1="179" y1="329.5" x2="520" y2="329.5"/><line x1="179" y1="347.5" x2="520" y2="347.5"/><line x1="179" y1="365.5" x2="520" y2="365.5"/><line x1="179" y1="383.5" x2="520" y2="383.5"/><line x1="179" y1="401.5" x2="520" y2="401.5"/><line x1="179" y1="419.5" x2="520" y2="419.5"/><line x1="179" y1="437.5" x2="520" y2="437.5"/><line x1="179" y1="455.5" x2="520" y2="455.5"/><line x1="179" y1="473.5" x2="520" y2="473.5"/><line x1="179" y1="491.5" x2="520" y2="491.5"/><line x1="179" y1="509.5" x2="520" y2="509.5"/><line x1="179" y1="527.5" x2="520" y2="527.5"/><line x1="179" y1="545.5" x2="520" y2="545.5"/><line x1="179" y1="562.5" x2="520" y2="562.5"/><line x1="179" y1="580.5" x2="520" y2="580.5"/><line x1="179" y1="598.5" x2="520" y2="598.5"/><line x1="179" y1="616.5" x2="520" y2="616.5"/><line x1="179" y1="634.5" x2="520" y2="634.5"/><line x1="179" y1="652.5" x2="520" y2="652.5"/><line x1="179" y1="670.5" x2="520" y2="670.5"/><line x1="179" y1="688.5" x2="520" y2="688.5"/><line x1="179" y1="706.5" x2="520" y2="706.5"/><line x1="179" y1="724.5" x2="520" y2="724.5"/><line x1="179" y1="742.5" x2="520" y2="742.5"/><line x1="179" y1="760.5" x2="520" y2="760.5"/><line x1="179" y1="778.5" x2="520" y2="778.5"/><line x1="179" y1="796.5" x2="520" y2="796.5"/><line x1="179" y1="814.5" x2="520" y2="814.5"/><line x1="179" y1="832.5" x2="520" y2="832.5"/><line x1="179" y1="850.5" x2="520" y2="850.5"/><line x1="179" y1="868.5" x2="520" y2="868.5"/><line x1="179" y1="885.5" x2="520" y2="885.5"/><line x1="179" y1="903.5" x2="520" y2="903.5"/><line x1="179" y1="921.5" x2="520" y2="921.5"/></g><g stroke="#000" stroke-width="1.3" fill="none"><line x1="178.5" y1="221" x2="178.5" y2="940"/><line x1="178" y1="221.5" x2="520" y2="221.5"/><line x1="178" y1="939.4" x2="520" y2="939.4"/></g><rect x="253.5" y="815.2" width="74" height="64.6" fill="none" stroke="#b4b4b4" stroke-width="1.5" stroke-dasharray="6,3"/></svg>
<span class="t" style="left:171.5px;top:209.88px;font-size:21.80px;line-height:27px;color:#777777;transform:scaleX(0.9093);">0</span>
<span class="t" style="left:171.5px;top:924.98px;font-size:21.80px;line-height:27px;color:#777777;transform:scaleX(0.9093);">0</span>
<span class="t" style="left:238.1px;top:209.88px;font-size:21.80px;line-height:27px;color:#777777;transform:scaleX(0.9506);">40</span>
<span class="t" style="left:238.1px;top:924.98px;font-size:21.80px;line-height:27px;color:#777777;transform:scaleX(0.9506);">40</span>
<span class="t" style="left:309.7px;top:209.88px;font-size:21.80px;line-height:27px;color:#777777;transform:scaleX(0.9506);">80</span>
<span class="t" style="left:309.7px;top:924.98px;font-size:21.80px;line-height:27px;color:#777777;transform:scaleX(0.9506);">80</span>
<span class="t" style="left:375.8px;top:209.88px;font-size:21.80px;line-height:27px;color:#777777;transform:scaleX(0.9368);">120</span>
<span class="t" style="left:375.8px;top:924.98px;font-size:21.80px;line-height:27px;color:#777777;transform:scaleX(0.9368);">120</span>
<span class="t" style="left:447.4px;top:209.88px;font-size:21.80px;line-height:27px;color:#777777;transform:scaleX(0.9368);">160</span>
<span class="t" style="left:447.4px;top:924.98px;font-size:21.80px;line-height:27px;color:#777777;transform:scaleX(0.9368);">160</span>
<span class="t" style="left:90.0px;top:281.18px;font-size:21.80px;line-height:27px;color:#777777;transform:scaleX(0.8817);">360</span>
<span class="t" style="left:90.0px;top:352.78px;font-size:21.80px;line-height:27px;color:#777777;transform:scaleX(0.8817);">320</span>
<span class="t" style="left:90.0px;top:424.38px;font-size:21.80px;line-height:27px;color:#777777;transform:scaleX(0.8817);">280</span>
<span class="t" style="left:90.0px;top:495.98px;font-size:21.80px;line-height:27px;color:#777777;transform:scaleX(0.8817);">240</span>
<span class="t" style="left:90.0px;top:567.58px;font-size:21.80px;line-height:27px;color:#777777;transform:scaleX(0.8817);">200</span>
<span class="t" style="left:90.0px;top:639.18px;font-size:21.80px;line-height:27px;color:#777777;transform:scaleX(0.8817);">160</span>
<span class="t" style="left:90.0px;top:710.78px;font-size:21.80px;line-height:27px;color:#777777;transform:scaleX(0.8817);">120</span>
<span class="t" style="left:90.0px;top:782.38px;font-size:21.80px;line-height:27px;color:#777777;transform:scaleX(0.9093);">80</span>
<span class="t" style="left:90.0px;top:853.98px;font-size:21.80px;line-height:27px;color:#777777;transform:scaleX(0.9093);">40</span>
<span class="t" style="left:90.0px;top:209.88px;font-size:21.80px;line-height:27px;color:#777777;transform:scaleX(0.8817);">400</span>
<span class="t" style="left:91.0px;top:209.88px;font-size:21.80px;line-height:27px;color:#777777;transform:scaleX(0.9861);">-40</span>
<span class="t" style="left:90.0px;top:924.98px;font-size:21.80px;line-height:27px;color:#777777;transform:scaleX(0.9093);">0</span>
<span class="t" style="left:91.0px;top:924.98px;font-size:21.80px;line-height:27px;color:#777777;transform:scaleX(0.9861);">-40</span>
<svg class="a" style="left:0;top:0" width="1787" height="1001"><rect x="181" y="933" width="4.5" height="6.5" fill="#a01414"/><rect x="174.5" y="934.5" width="7.5" height="9.5" rx="1.5" fill="rgba(90,210,90,0.72)" stroke="#4aa84a" stroke-width="1"/><rect x="176.5" y="936" width="3" height="5" fill="rgba(190,240,190,0.6)"/></svg>
<span class="t" style="left:170.5px;top:898.33px;font-size:16.35px;line-height:20px;color:#8a3c2c;transform:scaleX(0.9225);">Y</span>
<span class="t" style="left:203.5px;top:932.83px;font-size:16.35px;line-height:20px;color:#8a3c2c;transform:scaleX(0.9225);">X</span>
<div style="left:1px;top:205px;width:81px;height:751px;background:#f0f0f0;"></div>
<svg class="a" style="left:0;top:0" width="1787" height="1001" ><rect x="5" y="209" width="1.5" height="1.5" fill="#b5b5b5"/><rect x="8" y="209" width="1.5" height="1.5" fill="#b5b5b5"/><rect x="11" y="209" width="1.5" height="1.5" fill="#b5b5b5"/><rect x="14" y="209" width="1.5" height="1.5" fill="#b5b5b5"/><rect x="17" y="209" width="1.5" height="1.5" fill="#b5b5b5"/><rect x="20" y="209" width="1.5" height="1.5" fill="#b5b5b5"/><rect x="23" y="209" width="1.5" height="1.5" fill="#b5b5b5"/><rect x="26" y="209" width="1.5" height="1.5" fill="#b5b5b5"/><rect x="29" y="209" width="1.5" height="1.5" fill="#b5b5b5"/><rect x="32" y="209" width="1.5" height="1.5" fill="#b5b5b5"/><rect x="35" y="209" width="1.5" height="1.5" fill="#b5b5b5"/><rect x="38" y="209" width="1.5" height="1.5" fill="#b5b5b5"/><rect x="41" y="209" width="1.5" height="1.5" fill="#b5b5b5"/><rect x="44" y="209" width="1.5" height="1.5" fill="#b5b5b5"/><rect x="47" y="209" width="1.5" height="1.5" fill="#b5b5b5"/><rect x="50" y="209" width="1.5" height="1.5" fill="#b5b5b5"/><rect x="53" y="209" width="1.5" height="1.5" fill="#b5b5b5"/><rect x="56" y="209" width="1.5" height="1.5" fill="#b5b5b5"/><rect x="59" y="209" width="1.5" height="1.5" fill="#b5b5b5"/><rect x="62" y="209" width="1.5" height="1.5" fill="#b5b5b5"/><rect x="65" y="209" width="1.5" height="1.5" fill="#b5b5b5"/><rect x="68" y="209" width="1.5" height="1.5" fill="#b5b5b5"/><rect x="71" y="209" width="1.5" height="1.5" fill="#b5b5b5"/><rect x="74" y="209" width="1.5" height="1.5" fill="#b5b5b5"/><rect x="77" y="209" width="1.5" height="1.5" fill="#b5b5b5"/></svg>
<div style="left:1px;top:539px;width:81px;height:1px;background:#c6c6c6;"></div>
<div style="left:1px;top:540px;width:81px;height:1px;background:#fbfbfb;"></div>
<svg class="a" style="left:0;top:0" width="1787" height="1001" ><rect x="5" y="545" width="1.5" height="1.5" fill="#b5b5b5"/><rect x="8" y="545" width="1.5" height="1.5" fill="#b5b5b5"/><rect x="11" y="545" width="1.5" height="1.5" fill="#b5b5b5"/><rect x="14" y="545" width="1.5" height="1.5" fill="#b5b5b5"/><rect x="17" y="545" width="1.5" height="1.5" fill="#b5b5b5"/><rect x="20" y="545" width="1.5" height="1.5" fill="#b5b5b5"/><rect x="23" y="545" width="1.5" height="1.5" fill="#b5b5b5"/><rect x="26" y="545" width="1.5" height="1.5" fill="#b5b5b5"/><rect x="29" y="545" width="1.5" height="1.5" fill="#b5b5b5"/><rect x="32" y="545" width="1.5" height="1.5" fill="#b5b5b5"/><rect x="35" y="545" width="1.5" height="1.5" fill="#b5b5b5"/><rect x="38" y="545" width="1.5" height="1.5" fill="#b5b5b5"/><rect x="41" y="545" width="1.5" height="1.5" fill="#b5b5b5"/><rect x="44" y="545" width="1.5" height="1.5" fill="#b5b5b5"/><rect x="47" y="545" width="1.5" height="1.5" fill="#b5b5b5"/><rect x="50" y="545" width="1.5" height="1.5" fill="#b5b5b5"/><rect x="53" y="545" width="1.5" height="1.5" fill="#b5b5b5"/><rect x="56" y="545" width="1.5" height="1.5" fill="#b5b5b5"/><rect x="59" y="545" width="1.5" height="1.5" fill="#b5b5b5"/><rect x="62" y="545" width="1.5" height="1.5" fill="#b5b5b5"/><rect x="65" y="545" width="1.5" height="1.5" fill="#b5b5b5"/><rect x="68" y="545" width="1.5" height="1.5" fill="#b5b5b5"/><rect x="71" y="545" width="1.5" height="1.5" fill="#b5b5b5"/><rect x="74" y="545" width="1.5" height="1.5" fill="#b5b5b5"/><rect x="77" y="545" width="1.5" height="1.5" fill="#b5b5b5"/></svg>
<div style="left:6px;top:590px;width:70px;height:1px;background:#d2d2d2;"></div>
<div style="left:6px;top:727px;width:70px;height:1px;background:#d2d2d2;"></div>
<div style="left:6px;top:800px;width:70px;height:1px;background:#d2d2d2;"></div>
<svg class="a" style="left:0;top:0" width="1787" height="1001" ><path d="M32.7,221.3 L51.5,234 L44.3,236 L49,243.8 L44.8,246.6 L40.2,238.6 L34.3,243.6 Z" fill="#f4f4f4" stroke="#000" stroke-width="2.4" stroke-linejoin="round"/><g transform="translate(47.3,253) rotate(27.5)"><path d="M-4,2.5 Q-4,-1.5 0,-1.5 Q4,-1.5 4,2.5 V21 L0,30 L-4,21 Z" fill="#000"/><path d="M-4,4.3 H4" stroke="#f0f0f0" stroke-width="0.9"/><path d="M-3,21.3 H3 L0,28.3 Z" fill="#f0f0f0"/></g><rect x="25.5" y="282.5" width="33" height="30" fill="#cce4f7" stroke="#99d1ff" stroke-width="1"/><rect x="30.5" y="286.5" width="25" height="24.5" fill="#c3dcf2" stroke="#ec1c24" stroke-width="3"/><circle cx="41.8" cy="330" r="11.8" fill="none" stroke="#000" stroke-width="3.6"/><path d="M28.6,362 L35,350.7 H48.3 L54.7,362 L48.3,373.3 H35 Z" fill="none" stroke="#000" stroke-width="3.4" stroke-linejoin="miter"/><path d="M39,381.5 L49.5,384.5 L54.5,396 L46.5,406.5 L30,406.5 L30,387 Z" fill="none" stroke="#000" stroke-width="2.4" stroke-linejoin="round"/><path d="M30,387 Q33,382.5 39,381.5" fill="none" stroke="#000" stroke-width="2.4"/><circle cx="39" cy="381.5" r="1.9" fill="#000"/><circle cx="49.5" cy="384.5" r="1.9" fill="#000"/><circle cx="54.5" cy="396" r="1.9" fill="#000"/><circle cx="46.5" cy="406.5" r="1.9" fill="#000"/><circle cx="30" cy="406.5" r="1.9" fill="#000"/><circle cx="30" cy="387" r="1.9" fill="#000"/><path d="M29.8,413.8 H54.6" stroke="#000" stroke-width="1.7"/><path d="M30.5,420.5 V437.3 H38.7 M45.7,437.3 H53.9 V420.5" fill="none" stroke="#000" stroke-width="2.2"/><path d="M32.2,467.6 L39.7,448.2 H44.4 L51.9,467.6 H46.6 L45.5,464 H38.6 L37.5,467.6 Z M39.9,460 H44.2 L42.05,453 Z" fill="#000" fill-rule="evenodd"/><path d="M42,503.8 Q31.8,492 31.8,486.3 A10.2,10.2 0 0 1 52.2,486.3 Q52.2,492 42,503.8 Z M42,482 A3.6,3.6 0 1 0 42.01,482 Z" fill="#000" fill-rule="evenodd"/><g transform="translate(41.9,522) rotate(-40)"><rect x="-16" y="-3.7" width="32" height="7.4" fill="none" stroke="#000" stroke-width="1.8"/><path d="M-12,-3.7 V0.8" stroke="#000" stroke-width="1.2"/><path d="M-8,-3.7 V-0.5" stroke="#000" stroke-width="1.2"/><path d="M-4,-3.7 V0.8" stroke="#000" stroke-width="1.2"/><path d="M0,-3.7 V-0.5" stroke="#000" stroke-width="1.2"/><path d="M4,-3.7 V0.8" stroke="#000" stroke-width="1.2"/><path d="M8,-3.7 V-0.5" stroke="#000" stroke-width="1.2"/><path d="M12,-3.7 V0.8" stroke="#000" stroke-width="1.2"/></g><ellipse cx="42.4" cy="569.6" rx="11.8" ry="13" fill="none" stroke="#000" stroke-width="1.5"/><ellipse cx="42.4" cy="569.6" rx="9.3" ry="10.6" fill="none" stroke="#000" stroke-width="2.3"/><ellipse cx="42.4" cy="569.6" rx="6.6" ry="8.2" fill="none" stroke="#000" stroke-width="1.4"/><path d="M39.5,597.8 H54 V614.5 H50 V623.5 H35.5 V601.8 H30 V601.8 H29.6 V617.6 H35.5" fill="none" stroke="#555" stroke-width="0"/><path d="M39.3,601.6 V598 H54.2 V614.6 H50.6 V623.6 H35.6 V617.8 H29.8 V601.6 Z" fill="none" stroke="#555" stroke-width="2.2"/><path d="M39.3,601.6 V606.5 H35.6 V617.8 M39.3,606.5 H45 V614.6 H50.6 M45,614.6 V617.8 H35.6" fill="none" stroke="#555" stroke-width="1" stroke-dasharray="1.2,1.2"/><path d="M29.6,630.6 H47.6 V636.8 H54.4 V655.4 H36.2 V648.6 H29.6 Z" fill="none" stroke="#555" stroke-width="2.4"/><rect x="36.2" y="636.8" width="11.4" height="11.8" fill="none" stroke="#555" stroke-width="1.3" stroke-dasharray="1.3,1.3"/><path d="M29.6,662.2 H48.6 V669.6 H36.8 V681.4 H29.6 Z" fill="none" stroke="#555" stroke-width="2.4"/><path d="M48.6,669.6 H55 V688 H36.8 V681.4 M48.6,669.6 V681.4 H36.8" fill="none" stroke="#555" stroke-width="1.1" stroke-dasharray="1.3,1.3"/><path d="M36.2,700.6 V693.6 H47.4 V700.6 M47.4,701.4 H55 V720 H36.6 V713 M36.2,713 H29 V693.6 H36.2" fill="none" stroke="#555" stroke-width="1.1" stroke-dasharray="1.3,1.3"/><rect x="36.2" y="700.8" width="11.4" height="11.8" fill="none" stroke="#555" stroke-width="2.4"/><rect x="28.0" y="733.6" width="7" height="7" fill="#000"/><rect x="28.0" y="744.1" width="7" height="7" fill="#000"/><rect x="28.0" y="754.6" width="7" height="7" fill="#000"/><rect x="38.5" y="733.6" width="7" height="7" fill="#000"/><rect x="38.5" y="744.1" width="7" height="7" fill="#000"/><rect x="38.5" y="754.6" width="7" height="7" fill="#000"/><rect x="49.0" y="733.6" width="7" height="7" fill="#000"/><rect x="49.0" y="744.1" width="7" height="7" fill="#000"/><rect x="49.0" y="754.6" width="7" height="7" fill="#000"/><rect x="38.9" y="766.1999999999999" width="6" height="6" fill="#000"/><rect x="-2.4" y="-2.4" width="4.8" height="4.8" transform="translate(49.5,772.2) rotate(45)" fill="#fff" stroke="#000" stroke-width="1.2"/><rect x="-2.4" y="-2.4" width="4.8" height="4.8" transform="translate(52.6,779.8) rotate(90)" fill="#fff" stroke="#000" stroke-width="1.2"/><rect x="-2.4" y="-2.4" width="4.8" height="4.8" transform="translate(49.5,787.4) rotate(135)" fill="#fff" stroke="#000" stroke-width="1.2"/><rect x="-2.4" y="-2.4" width="4.8" height="4.8" transform="translate(41.9,790.5) rotate(180)" fill="#fff" stroke="#000" stroke-width="1.2"/><rect x="-2.4" y="-2.4" width="4.8" height="4.8" transform="translate(34.3,787.4) rotate(225)" fill="#fff" stroke="#000" stroke-width="1.2"/><rect x="-2.4" y="-2.4" width="4.8" height="4.8" transform="translate(31.2,779.8) rotate(270)" fill="#fff" stroke="#000" stroke-width="1.2"/><rect x="-2.4" y="-2.4" width="4.8" height="4.8" transform="translate(34.3,772.2) rotate(315)" fill="#fff" stroke="#000" stroke-width="1.2"/><path d="M30.3,814.5 L48.5,812.3 L54,823.3 L46.2,833 L30.3,833 Z" fill="none" stroke="#7a7a7a" stroke-width="1.8"/><path d="M30.3,814.5 Q34,809.5 40,809.3" fill="none" stroke="#7a7a7a" stroke-width="1.8"/><circle cx="30.3" cy="814.5" r="1.8" fill="#7a7a7a"/><circle cx="48.5" cy="812.3" r="1.8" fill="#7a7a7a"/><circle cx="54" cy="823.3" r="1.8" fill="#7a7a7a"/><circle cx="46.2" cy="833" r="1.8" fill="#7a7a7a"/><circle cx="30.3" cy="833" r="1.8" fill="#7a7a7a"/><path d="M38,809.4 H43 M41.5,806.6 L46.6,810.2 L41.5,813 Z" fill="#000" stroke="#000" stroke-width="1.3"/><path d="M29.2,866 V852 Q29.2,840.2 42,840.2 H55" fill="none" stroke="#000" stroke-width="2.4"/><path d="M55,840.2 V865.6 H29.2" fill="none" stroke="#000" stroke-width="1.4" stroke-dasharray="3,1.6"/></svg>
<span class="t" style="left:15.0px;top:868.27px;font-size:18.53px;line-height:23px;color:#8a8a8a;transform:scaleX(0.8131);">Radius:</span>
<div style="left:3px;top:888px;width:78px;height:23px;background:#f0f0f0;border:1px solid #cfcfcf;box-sizing:border-box;"></div>
<div style="left:65px;top:890px;width:14px;height:19px;background:#f0f0f0;border:1px solid #dcdcdc;box-sizing:border-box;"></div>
<svg class="a" style="left:0;top:0" width="1787" height="1001"><polygon points="67.3,898.2 76.7,898.2 72.0,892.9000000000001" fill="#6a6a6a"/><polygon points="67.3,901.2 76.7,901.2 72.0,906.5" fill="#6a6a6a"/></svg>
<span class="t" style="left:18.0px;top:888.77px;font-size:18.53px;line-height:23px;color:#8c8c8c;transform:scaleX(0.8609);">10.0</span>
<div style="left:0px;top:956px;width:82px;height:1px;background:#c0c0c0;"></div>
<div style="left:1232px;top:204px;width:555px;height:32px;background:linear-gradient(90deg,#5c1a1c 0%,#7a2023 14%,#a0282b 30%,#c03236 44%,#c84034 55%,#cc5030 70%,#d8682e 85%,#e27c2e 100%);"></div>
<svg class="a" style="left:0;top:0" width="1787" height="1001" ><path d="M1737.9,218 V213.7 H1745.5 V221.2 H1743" fill="none" stroke="#3a3a42" stroke-width="1.5"/><path d="M1737.4,213.8 H1746" stroke="#3a3a42" stroke-width="2.4"/><rect x="1734.6" y="218.6" width="8" height="7" fill="none" stroke="#3a3a42" stroke-width="1.5"/><path d="M1734,218.8 H1743.2" stroke="#3a3a42" stroke-width="2.6"/><path d="M1765.5,214.8 L1775.5,225.2 M1775.5,214.8 L1765.5,225.2" stroke="#3a3a42" stroke-width="2.7" stroke-linecap="butt"/></svg>
<div style="left:1232px;top:236px;width:522px;height:206px;background:#fff;"></div>
<div style="left:1319px;top:237px;width:1px;height:36px;background:#e5e5e5;"></div>
<div style="left:1392px;top:237px;width:1px;height:36px;background:#e5e5e5;"></div>
<div style="left:1450px;top:237px;width:1px;height:36px;background:#e5e5e5;"></div>
<span class="t" style="left:1228.0px;top:244.70px;font-size:17.44px;line-height:22px;color:#000;transform:scaleX(0.9948);">d/Pwr</span>
<span class="t" style="left:1326.0px;top:244.70px;font-size:17.44px;line-height:22px;color:#000;transform:scaleX(1.0848);">Output</span>
<span class="t" style="left:1399.0px;top:244.70px;font-size:17.44px;line-height:22px;color:#000;transform:scaleX(1.0051);">Show</span>
<span class="t" style="left:1457.0px;top:244.70px;font-size:17.44px;line-height:22px;color:#000;transform:scaleX(1.0287);">Air</span>
<div style="left:1232px;top:273px;width:522px;height:31px;background:#d9d9d9;"></div>
<span class="t" style="left:1233.0px;top:278.70px;font-size:17.44px;line-height:22px;color:#000;transform:scaleX(1.0094);">0.0 / 100.0</span>
<div style="left:1345px;top:284.1px;width:15px;height:7.8px;background:#990000;border-radius:2.4px;border:0.6px solid #6a0000;box-sizing:border-box"></div>
<div style="left:1344px;top:283.1px;width:8px;height:9.8px;background:#e6dcdc;border-radius:2.8px;border:1.2px solid #000;box-sizing:border-box"></div>
<div style="left:1410px;top:284.1px;width:15px;height:7.8px;background:#00dd00;border-radius:2.4px;border:0.6px solid #0a8a0a;box-sizing:border-box"></div>
<div style="left:1417px;top:283.1px;width:8px;height:9.8px;background:#e8f0e8;border-radius:2.8px;border:1.2px solid #000;box-sizing:border-box"></div>
<div style="left:1590px;top:284.1px;width:15px;height:7.8px;background:#00dd00;border-radius:2.4px;border:0.6px solid #0a8a0a;box-sizing:border-box"></div>
<div style="left:1597px;top:283.1px;width:8px;height:9.8px;background:#e8f0e8;border-radius:2.8px;border:1.2px solid #000;box-sizing:border-box"></div>
<div style="left:1232px;top:442px;width:522px;height:1px;background:#9aa0a8;"></div>
<div style="left:1753px;top:235px;width:1px;height:208px;background:#7f8a96;"></div>
<div style="left:1232px;top:235px;width:522px;height:1px;background:#7f8a96;"></div>
<div style="left:1756px;top:247px;width:29px;height:31px;background:#e1e1e1;border:1px solid #adadad;box-sizing:border-box;"></div>
<svg class="a" style="left:0;top:0" width="1787" height="1001" ><path d="M1766.0,264.8 L1770.5,260.2 L1775.0,264.8" fill="none" stroke="#000" stroke-width="2.3"/></svg>
<div style="left:1756px;top:280px;width:29px;height:31px;background:#e1e1e1;border:1px solid #adadad;box-sizing:border-box;"></div>
<svg class="a" style="left:0;top:0" width="1787" height="1001" ><path d="M1766.0,293.2 L1770.5,297.8 L1775.0,293.2" fill="none" stroke="#000" stroke-width="2.3"/></svg>
<div style="left:1756px;top:323px;width:29px;height:32px;background:#e1e1e1;border:1px solid #adadad;box-sizing:border-box;"></div>
<svg class="a" style="left:0;top:0" width="1787" height="1001" ><path d="M1767.0,333.0 Q1767.0,331.0 1769.0,331.0 H1771.0 Q1773.0,331.0 1773.0,333.0" fill="none" stroke="#000" stroke-width="1.3"/><path d="M1763.5,333.5 H1776.5" stroke="#000" stroke-width="1.8"/><path d="M1765.0,334.5 V345.0 Q1765.0,346.5 1766.5,346.5 H1773.5 Q1775.0,346.5 1775.0,345.0 V334.5" fill="none" stroke="#000" stroke-width="1.5"/><path d="M1767.6,336.5 V344.3 M1770.0,336.5 V344.3 M1772.4,336.5 V344.3" stroke="#000" stroke-width="1.2"/></svg>
<div style="left:1756px;top:367px;width:29px;height:32px;background:#e1e1e1;border:1px solid #adadad;box-sizing:border-box;"></div>
<svg class="a" style="left:0;top:0" width="1787" height="1001" ><path d="M1767.7,378.5 L1772.3,383.0 L1767.7,387.5" fill="none" stroke="#000" stroke-width="2.3"/></svg>
<div style="left:1756px;top:401px;width:29px;height:32px;background:#e1e1e1;border:1px solid #adadad;box-sizing:border-box;"></div>
<svg class="a" style="left:0;top:0" width="1787" height="1001" ><path d="M1772.3,412.5 L1767.7,417.0 L1772.3,421.5" fill="none" stroke="#000" stroke-width="2.3"/></svg>
<span class="t" style="left:1412.0px;top:449.30px;font-size:17.44px;line-height:22px;color:#000;transform:scaleX(0.8954);">Layer Color</span>
<div style="left:1499px;top:448px;width:82px;height:23px;background:#000;"></div>
<span class="t" style="left:1588.0px;top:449.30px;font-size:17.44px;line-height:22px;color:#000;transform:scaleX(0.9332);">Speed (mm/m)</span>
<div style="left:1702px;top:448px;width:79px;height:23px;background:#fff;border:1px solid #7a7a7a;box-sizing:border-box;"></div>
<div style="left:1765px;top:450px;width:14px;height:19px;background:#f3f3f3;border:1px solid #c8c8c8;box-sizing:border-box;"></div>
<svg class="a" style="left:0;top:0" width="1787" height="1001"><polygon points="1767.3,458.2 1776.7,458.2 1772.0,452.9" fill="#000"/><polygon points="1767.3,461.2 1776.7,461.2 1772.0,466.5" fill="#000"/></svg>
<span class="t" style="left:1725.0px;top:449.30px;font-size:17.44px;line-height:22px;color:#000;transform:scaleX(0.8989);">1500</span>
<span class="t" style="left:1415.0px;top:473.30px;font-size:17.44px;line-height:22px;color:#000;transform:scaleX(0.8621);">Pass Count</span>
<div style="left:1499px;top:472px;width:82px;height:23px;background:#fff;border:1px solid #7a7a7a;box-sizing:border-box;"></div>
<div style="left:1565px;top:474px;width:14px;height:19px;background:#f3f3f3;border:1px solid #c8c8c8;box-sizing:border-box;"></div>
<svg class="a" style="left:0;top:0" width="1787" height="1001"><polygon points="1567.3,482.2 1576.7,482.2 1572.0,476.9" fill="#000"/><polygon points="1567.3,485.2 1576.7,485.2 1572.0,490.5" fill="#000"/></svg>
<span class="t" style="left:1551.1px;top:473.30px;font-size:17.44px;line-height:22px;color:#000;transform:scaleX(0.9141);">1</span>
<span class="t" style="left:1586.0px;top:473.30px;font-size:17.44px;line-height:22px;color:#000;transform:scaleX(0.9197);">Power Max (%)</span>
<div style="left:1702px;top:472px;width:79px;height:23px;background:#fff;border:1px solid #7a7a7a;box-sizing:border-box;"></div>
<div style="left:1765px;top:474px;width:14px;height:19px;background:#f3f3f3;border:1px solid #c8c8c8;box-sizing:border-box;"></div>
<svg class="a" style="left:0;top:0" width="1787" height="1001"><polygon points="1767.3,482.2 1776.7,482.2 1772.0,476.9" fill="#000"/><polygon points="1767.3,485.2 1776.7,485.2 1772.0,490.5" fill="#000"/></svg>
<span class="t" style="left:1711.0px;top:473.30px;font-size:17.44px;line-height:22px;color:#000;transform:scaleX(0.9153);">100.00</span>
<span class="t" style="left:1394.0px;top:497.30px;font-size:17.44px;line-height:22px;color:#8a8a8a;transform:scaleX(0.9605);">Interval (mm)</span>
<div style="left:1499px;top:496px;width:82px;height:23px;background:#f0f0f0;border:1px solid #cfcfcf;box-sizing:border-box;"></div>
<div style="left:1565px;top:498px;width:14px;height:19px;background:#f0f0f0;border:1px solid #dcdcdc;box-sizing:border-box;"></div>
<svg class="a" style="left:0;top:0" width="1787" height="1001"><polygon points="1567.3,506.2 1576.7,506.2 1572.0,500.9" fill="#6a6a6a"/><polygon points="1567.3,509.2 1576.7,509.2 1572.0,514.5" fill="#6a6a6a"/></svg>
<span class="t" style="left:1520.0px;top:497.30px;font-size:17.44px;line-height:22px;color:#8c8c8c;transform:scaleX(0.9132);">0.100</span>
<span class="t" style="left:1596.0px;top:521.30px;font-size:17.44px;line-height:22px;color:#000;transform:scaleX(0.9266);">Material (mm)</span>
<div style="left:1702px;top:520px;width:79px;height:23px;background:#fff;border:1px solid #7a7a7a;box-sizing:border-box;"></div>
<div style="left:1765px;top:522px;width:14px;height:19px;background:#f3f3f3;border:1px solid #c8c8c8;box-sizing:border-box;"></div>
<svg class="a" style="left:0;top:0" width="1787" height="1001"><polygon points="1767.3,530.2 1776.7,530.2 1772.0,524.9000000000001" fill="#000"/><polygon points="1767.3,533.2 1776.7,533.2 1772.0,538.5" fill="#000"/></svg>
<span class="t" style="left:1738.0px;top:521.30px;font-size:17.44px;line-height:22px;color:#000;transform:scaleX(0.9042);">0.0</span>
<div style="left:1232px;top:547px;width:555px;height:1px;background:#c6c6c6;"></div>
<div style="left:1232px;top:548px;width:555px;height:1px;background:#fbfbfb;"></div>
<div style="left:1232px;top:581px;width:555px;height:31px;background:linear-gradient(90deg,#5c1a1c 0%,#7a2023 14%,#a0282b 30%,#c03236 44%,#c84034 55%,#cc5030 70%,#d8682e 85%,#e27c2e 100%);"></div>
<svg class="a" style="left:0;top:0" width="1787" height="1001" ><path d="M1737.9,595 V590.7 H1745.5 V598.2 H1743" fill="none" stroke="#3a3a42" stroke-width="1.5"/><path d="M1737.4,590.8 H1746" stroke="#3a3a42" stroke-width="2.4"/><rect x="1734.6" y="595.6" width="8" height="7" fill="none" stroke="#3a3a42" stroke-width="1.5"/><path d="M1734,595.8 H1743.2" stroke="#3a3a42" stroke-width="2.6"/><path d="M1765.5,591.8 L1775.5,602.2 M1775.5,591.8 L1765.5,602.2" stroke="#3a3a42" stroke-width="2.7" stroke-linecap="butt"/></svg>
<div style="left:1225px;top:634px;width:33px;height:33px;background:#e1e1e1;border:1px solid #adadad;box-sizing:border-box;"></div>
<div style="left:1263px;top:634px;width:258px;height:33px;background:#e1e1e1;border:1px solid #adadad;box-sizing:border-box;"></div>
<span class="t" style="left:1390.5px;top:640.30px;font-size:17.44px;line-height:22px;color:#000;transform:scaleX(0.8610);">Stop</span>
<div style="left:1362px;top:638px;width:24px;height:24px;background:#000;border-radius:1px;"></div>
<div style="left:1526px;top:634px;width:259px;height:33px;background:#e1e1e1;border:1px solid #adadad;box-sizing:border-box;"></div>
<span class="t" style="left:1652.5px;top:640.30px;font-size:17.44px;line-height:22px;color:#000;transform:scaleX(0.9199);">Start</span>
<svg class="a" style="left:0;top:0" width="1787" height="1001"><polygon points="1626.5,638 1626.5,663 1648,650.5" fill="#000"/></svg>
<div style="left:1225px;top:670px;width:165px;height:33px;background:#e1e1e1;border:1px solid #adadad;box-sizing:border-box;"></div>
<span class="t" style="left:1285.0px;top:676.30px;font-size:17.44px;line-height:22px;color:#000;transform:scaleX(0.8701);">Frame</span>
<svg class="a" style="left:0;top:0" width="1787" height="1001" ><circle cx="1268.8" cy="686" r="10.6" fill="none" stroke="#000" stroke-width="2.6" stroke-dasharray="9.1,2" stroke-dashoffset="-1" /></svg>
<div style="left:1395px;top:670px;width:192px;height:33px;background:#e1e1e1;border:1px solid #adadad;box-sizing:border-box;"></div>
<span class="t" style="left:1449.0px;top:676.30px;font-size:17.44px;line-height:22px;color:#000;transform:scaleX(0.8383);">Save GCode</span>
<div style="left:1592px;top:670px;width:193px;height:33px;background:#e1e1e1;border:1px solid #adadad;box-sizing:border-box;"></div>
<span class="t" style="left:1648.5px;top:676.30px;font-size:17.44px;line-height:22px;color:#000;transform:scaleX(0.8656);">Run GCode</span>
<div style="left:1225px;top:706px;width:163px;height:32px;background:#e1e1e1;border:1px solid #adadad;box-sizing:border-box;"></div>
<span class="t" style="left:1249.5px;top:711.80px;font-size:17.44px;line-height:22px;color:#000;transform:scaleX(0.9220);">Go to Origin</span>
<span class="t" style="left:1507.0px;top:712.30px;font-size:17.44px;line-height:22px;color:#000;transform:scaleX(0.9141);">Start From:</span>
<div style="left:1594px;top:710px;width:192px;height:25px;background:#e1e1e1;border:1px solid #adadad;box-sizing:border-box;"></div>
<span class="t" style="left:1598.0px;top:712.30px;font-size:17.44px;line-height:22px;color:#0f4d1c;transform:scaleX(0.8965);">Absolute Coords</span>
<svg class="a" style="left:1765px;top:717.5px" width="14" height="10"><polyline points="1.5,2.5 7,8 12.5,2.5" fill="none" stroke="#444" stroke-width="1.2"/></svg>
<span class="t" style="left:1513.5px;top:761.30px;font-size:17.44px;line-height:22px;color:#000;transform:scaleX(0.9277);">Job Origin</span>
<div style="left:1596px;top:741px;width:187px;height:56px;border:1px solid #e2e2e2;box-sizing:border-box;"></div>
<div style="left:1597.0px;top:741.0px;width:20px;height:20px;border-radius:50%;background:#fff;border:1px solid #c4c4c4;box-sizing:border-box"></div>
<div style="left:1597.0px;top:761.0px;width:20px;height:20px;border-radius:50%;background:#fff;border:1px solid #c4c4c4;box-sizing:border-box"></div>
<div style="left:1597.0px;top:781.0px;width:20px;height:20px;border-radius:50%;background:#fff;border:1px solid #c4c4c4;box-sizing:border-box"></div>
<div style="left:1602.5px;top:786.5px;width:9px;height:9px;border-radius:50%;background:#bdbdbd"></div>
<div style="left:1659.0px;top:741.0px;width:20px;height:20px;border-radius:50%;background:#fff;border:1px solid #c4c4c4;box-sizing:border-box"></div>
<div style="left:1659.0px;top:761.0px;width:20px;height:20px;border-radius:50%;background:#fff;border:1px solid #c4c4c4;box-sizing:border-box"></div>
<div style="left:1659.0px;top:781.0px;width:20px;height:20px;border-radius:50%;background:#fff;border:1px solid #c4c4c4;box-sizing:border-box"></div>
<div style="left:1721.0px;top:741.0px;width:20px;height:20px;border-radius:50%;background:#fff;border:1px solid #c4c4c4;box-sizing:border-box"></div>
<div style="left:1721.0px;top:761.0px;width:20px;height:20px;border-radius:50%;background:#fff;border:1px solid #c4c4c4;box-sizing:border-box"></div>
<div style="left:1721.0px;top:781.0px;width:20px;height:20px;border-radius:50%;background:#fff;border:1px solid #c4c4c4;box-sizing:border-box"></div>
<div style="left:1396px;top:803px;width:389px;height:33px;background:#e1e1e1;border:1px solid #adadad;box-sizing:border-box;"></div>
<span class="t" style="left:1538.0px;top:809.30px;font-size:17.44px;line-height:22px;color:#000;transform:scaleX(0.8868);">Show Last Position</span>
<svg class="a" style="left:0;top:0" width="1787" height="1001" ><path d="M1517.9,819 H1526.1 M1522,814.9 V823.1" stroke="#ff0000" stroke-width="2.6"/><path d="M1511,819 H1515.8 M1528.3,819 H1533.3 M1522,808 V812.4 M1522,825.7 V830.2" stroke="#000" stroke-width="2.4"/></svg>
<div style="left:1396px;top:838px;width:389px;height:32px;background:#e1e1e1;border:1px solid #adadad;box-sizing:border-box;"></div>
<span class="t" style="left:1515.0px;top:843.80px;font-size:17.44px;line-height:22px;color:#000;transform:scaleX(0.9131);">Optimization Settings</span>
<div style="left:1225px;top:876px;width:223px;height:25px;background:#e1e1e1;border:1px solid #adadad;box-sizing:border-box;"></div>
<svg class="a" style="left:1427px;top:883.5px" width="14" height="10"><polyline points="1.5,2.5 7,8 12.5,2.5" fill="none" stroke="#444" stroke-width="1.2"/></svg>
<div style="left:1454px;top:876px;width:332px;height:25px;background:#e1e1e1;border:1px solid #adadad;box-sizing:border-box;"></div>
<span class="t" style="left:1458.0px;top:878.30px;font-size:17.44px;line-height:22px;color:#000;transform:scaleX(0.7974);">GRBL</span>
<svg class="a" style="left:1765px;top:883.5px" width="14" height="10"><polyline points="1.5,2.5 7,8 12.5,2.5" fill="none" stroke="#444" stroke-width="1.2"/></svg>
<div style="left:1232px;top:930px;width:555px;height:1px;background:#c6c6c6;"></div>
<div style="left:1232px;top:931px;width:555px;height:1px;background:#fbfbfb;"></div>
<span class="t" style="left:1243.0px;top:932.80px;font-size:17.44px;line-height:22px;color:#000;transform:scaleX(0.8879);">Move</span>
<div style="left:1298px;top:932px;width:1px;height:22px;background:#d9d9d9;"></div>
<span class="t" style="left:1316.0px;top:932.80px;font-size:17.44px;line-height:22px;color:#000;transform:scaleX(0.8986);">Camera Control</span>
<div style="left:1100px;top:954px;width:343px;height:1px;background:#d9d9d9;"></div>
<div style="left:1115px;top:950px;width:2px;height:2.5px;background:#2a1010;"></div>
<div style="left:1161px;top:950px;width:2px;height:2.5px;background:#2a1010;"></div>
<div style="left:1225px;top:932px;width:1px;height:22px;background:#d9d9d9;"></div>
<div style="left:0px;top:957px;width:1787px;height:40px;background:#f0f0f0;"></div>
<div style="left:0px;top:957px;width:1787px;height:1px;background:#fafafa;"></div>
<svg class="a" style="left:0;top:0" width="1787" height="1001" ><rect x="5" y="960" width="1.5" height="1.5" fill="#b5b5b5"/><rect x="5" y="963" width="1.5" height="1.5" fill="#b5b5b5"/><rect x="5" y="966" width="1.5" height="1.5" fill="#b5b5b5"/><rect x="5" y="969" width="1.5" height="1.5" fill="#b5b5b5"/><rect x="5" y="972" width="1.5" height="1.5" fill="#b5b5b5"/><rect x="5" y="975" width="1.5" height="1.5" fill="#b5b5b5"/><rect x="5" y="978" width="1.5" height="1.5" fill="#b5b5b5"/><rect x="5" y="981" width="1.5" height="1.5" fill="#b5b5b5"/><rect x="5" y="984" width="1.5" height="1.5" fill="#b5b5b5"/><rect x="5" y="987" width="1.5" height="1.5" fill="#b5b5b5"/><rect x="5" y="990" width="1.5" height="1.5" fill="#b5b5b5"/></svg>
<div style="left:15px;top:959px;width:34px;height:36px;background:#cce4f7;border:1px solid #99d1ff;box-sizing:border-box;"></div>
<div style="left:18px;top:963px;width:30px;height:30px;background:#000000;"></div>
<span class="t" style="left:23.8px;top:967.99px;font-size:14.17px;line-height:18px;color:#fff;transform:scaleX(1.0094);">00</span>
<div style="left:51px;top:962px;width:30px;height:30px;background:#0000ff;"></div>
<span class="t" style="left:56.8px;top:966.99px;font-size:14.17px;line-height:18px;color:#fff;transform:scaleX(1.0094);">01</span>
<div style="left:85px;top:962px;width:30px;height:30px;background:#ff0000;"></div>
<span class="t" style="left:90.8px;top:966.99px;font-size:14.17px;line-height:18px;color:#fff;transform:scaleX(1.0094);">02</span>
<div style="left:119px;top:962px;width:30px;height:30px;background:#00e000;"></div>
<span class="t" style="left:124.8px;top:966.99px;font-size:14.17px;line-height:18px;color:#000;transform:scaleX(1.0094);">03</span>
<div style="left:153px;top:962px;width:30px;height:30px;background:#d0d000;"></div>
<span class="t" style="left:158.8px;top:966.99px;font-size:14.17px;line-height:18px;color:#000;transform:scaleX(1.0094);">04</span>
<div style="left:187px;top:962px;width:30px;height:30px;background:#ff8000;"></div>
<span class="t" style="left:192.8px;top:966.99px;font-size:14.17px;line-height:18px;color:#000;transform:scaleX(1.0094);">05</span>
<div style="left:221px;top:962px;width:30px;height:30px;background:#00e0e0;"></div>
<span class="t" style="left:226.8px;top:966.99px;font-size:14.17px;line-height:18px;color:#000;transform:scaleX(1.0094);">06</span>
<div style="left:255px;top:962px;width:30px;height:30px;background:#ff00ff;"></div>
<span class="t" style="left:260.8px;top:966.99px;font-size:14.17px;line-height:18px;color:#fff;transform:scaleX(1.0094);">07</span>
<div style="left:289px;top:962px;width:30px;height:30px;background:#b4b4b4;"></div>
<span class="t" style="left:294.8px;top:966.99px;font-size:14.17px;line-height:18px;color:#000;transform:scaleX(1.0094);">08</span>
<div style="left:323px;top:962px;width:30px;height:30px;background:#0000a0;"></div>
<span class="t" style="left:328.8px;top:966.99px;font-size:14.17px;line-height:18px;color:#fff;transform:scaleX(1.0094);">09</span>
<div style="left:357px;top:962px;width:30px;height:30px;background:#a00000;"></div>
<span class="t" style="left:362.8px;top:966.99px;font-size:14.17px;line-height:18px;color:#fff;transform:scaleX(1.0094);">10</span>
<div style="left:391px;top:962px;width:30px;height:30px;background:#00a000;"></div>
<span class="t" style="left:396.8px;top:966.99px;font-size:14.17px;line-height:18px;color:#fff;transform:scaleX(1.0816);">11</span>
<div style="left:425px;top:962px;width:30px;height:30px;background:#a0a000;"></div>
<span class="t" style="left:430.8px;top:966.99px;font-size:14.17px;line-height:18px;color:#000;transform:scaleX(1.0094);">12</span>
<div style="left:459px;top:962px;width:30px;height:30px;background:#c08000;"></div>
<span class="t" style="left:464.8px;top:966.99px;font-size:14.17px;line-height:18px;color:#000;transform:scaleX(1.0094);">13</span>
<div style="left:493px;top:962px;width:30px;height:30px;background:#00a0ff;"></div>
<span class="t" style="left:498.8px;top:966.99px;font-size:14.17px;line-height:18px;color:#fff;transform:scaleX(1.0094);">14</span>
<div style="left:527px;top:962px;width:30px;height:30px;background:#a000a0;"></div>
<span class="t" style="left:532.8px;top:966.99px;font-size:14.17px;line-height:18px;color:#fff;transform:scaleX(1.0094);">15</span>
<div style="left:561px;top:962px;width:30px;height:30px;background:#808080;"></div>
<span class="t" style="left:566.8px;top:966.99px;font-size:14.17px;line-height:18px;color:#fff;transform:scaleX(1.0094);">16</span>
<div style="left:595px;top:962px;width:30px;height:30px;background:#7d87b9;"></div>
<span class="t" style="left:600.8px;top:966.99px;font-size:14.17px;line-height:18px;color:#000;transform:scaleX(1.0094);">17</span>
<div style="left:629px;top:962px;width:30px;height:30px;background:#bb7784;"></div>
<span class="t" style="left:634.8px;top:966.99px;font-size:14.17px;line-height:18px;color:#000;transform:scaleX(1.0094);">18</span>
<div style="left:663px;top:962px;width:30px;height:30px;background:#4a6fe3;"></div>
<span class="t" style="left:668.8px;top:966.99px;font-size:14.17px;line-height:18px;color:#fff;transform:scaleX(1.0094);">19</span>
<div style="left:697px;top:962px;width:30px;height:30px;background:#d33f6a;"></div>
<span class="t" style="left:702.8px;top:966.99px;font-size:14.17px;line-height:18px;color:#fff;transform:scaleX(1.0094);">20</span>
<div style="left:731px;top:962px;width:30px;height:30px;background:#8cd78c;"></div>
<span class="t" style="left:736.8px;top:966.99px;font-size:14.17px;line-height:18px;color:#000;transform:scaleX(1.0094);">21</span>
<div style="left:765px;top:962px;width:30px;height:30px;background:#f0b98d;"></div>
<span class="t" style="left:770.8px;top:966.99px;font-size:14.17px;line-height:18px;color:#000;transform:scaleX(1.0094);">22</span>
<div style="left:799px;top:962px;width:30px;height:30px;background:#f6c4e1;"></div>
<span class="t" style="left:804.8px;top:966.99px;font-size:14.17px;line-height:18px;color:#000;transform:scaleX(1.0094);">23</span>
<div style="left:833px;top:962px;width:30px;height:30px;background:#fa9ed4;"></div>
<span class="t" style="left:838.8px;top:966.99px;font-size:14.17px;line-height:18px;color:#000;transform:scaleX(1.0094);">24</span>
<div style="left:867px;top:962px;width:30px;height:30px;background:#500a78;"></div>
<span class="t" style="left:872.8px;top:966.99px;font-size:14.17px;line-height:18px;color:#fff;transform:scaleX(1.0094);">25</span>
<div style="left:901px;top:962px;width:30px;height:30px;background:#b45a00;"></div>
<span class="t" style="left:906.8px;top:966.99px;font-size:14.17px;line-height:18px;color:#fff;transform:scaleX(1.0094);">26</span>
<div style="left:935px;top:962px;width:30px;height:30px;background:#004754;"></div>
<span class="t" style="left:940.8px;top:966.99px;font-size:14.17px;line-height:18px;color:#fff;transform:scaleX(1.0094);">27</span>
<div style="left:969px;top:962px;width:30px;height:30px;background:#86fa88;"></div>
<span class="t" style="left:974.8px;top:966.99px;font-size:14.17px;line-height:18px;color:#000;transform:scaleX(1.0094);">28</span>
<div style="left:1003px;top:962px;width:30px;height:30px;background:#ffdb66;"></div>
<span class="t" style="left:1008.8px;top:966.99px;font-size:14.17px;line-height:18px;color:#000;transform:scaleX(1.0094);">29</span>
<div style="left:1039px;top:962px;width:1px;height:30px;background:#d0d0d0;"></div>
<div style="left:1046px;top:962px;width:30px;height:30px;background:#f36926;"></div>
<span class="t" style="left:1052.2px;top:966.99px;font-size:14.17px;line-height:18px;color:#000;transform:scaleX(0.9321);">T1</span>
<div style="left:1080px;top:962px;width:30px;height:30px;background:#0c96d9;"></div>
<span class="t" style="left:1086.2px;top:966.99px;font-size:14.17px;line-height:18px;color:#fff;transform:scaleX(0.9321);">T2</span>
<div style="left:0px;top:997px;width:1787px;height:4px;background:#222e38;"></div>
<div style="left:57px;top:997px;width:432px;height:4px;background:#e6e6e6;"></div>
<div style="left:489px;top:997px;width:499px;height:4px;background:#2b3840;"></div>
<div style="left:988px;top:997px;width:74px;height:4px;background:#4f5a64;"></div>
<div style="left:1062px;top:997px;width:725px;height:4px;background:#27323d;"></div>
<div style="left:515px;top:100px;width:718px;height:851px;background:#f0f0f0;border:1px solid #626262;box-sizing:border-box;box-shadow:0 3px 12px 1px rgba(0,0,0,0.30);"></div>
<div style="left:516px;top:101px;width:716px;height:44px;background:#fff;"></div>
<svg class="a" style="left:0;top:0" width="1787" height="1001" ><defs><linearGradient id="lg527_110" x1="0" y1="0" x2="1" y2="1"><stop offset="0" stop-color="#2c1212"/><stop offset="0.25" stop-color="#6a2426"/><stop offset="0.55" stop-color="#8c1420"/><stop offset="0.8" stop-color="#c4141f"/><stop offset="1" stop-color="#ff2028"/></linearGradient></defs><g transform="translate(527,110) scale(1.0)"><rect x="0" y="0" width="24" height="24" rx="1.8" fill="url(#lg527_110)"/><path d="M0,4.8 Q4,2 9,2.1 Q15,2.6 19,8.6 Q17,8.2 15.5,7.2 Q12,4.4 8,4.6 Q3,5 0,8.6 Z" fill="#fff"/><path d="M2,17 L6,14 L8.3,11.6 L12.3,9.4 L13.4,11 Q17,12.6 17.9,17 Q18.7,21 18.4,24 L12.8,24 Q14.2,21 13,18.3 L10,19.6 L5.2,21.2 L7.4,18.9 L4,19.2 Z" fill="#fff"/><path d="M5.5,18 L9.6,15.9" stroke="#8c1420" stroke-width="0.7"/><circle cx="8.7" cy="13.7" r="0.55" fill="#8c1420"/></g></svg>
<span class="t" style="left:555.7px;top:110.92px;font-size:20.17px;line-height:25px;color:#000;transform:scaleX(0.8720);">Cut Settings Editor - LightBurn 1.4.00</span>
<span class="t" style="left:1123.0px;top:110.74px;font-size:19.62px;line-height:25px;color:#000;transform:scaleX(0.8300);">?</span>
<svg class="a" style="left:0;top:0" width="1787" height="1001"><g stroke="#000" stroke-width="1.2"><line x1="1190" y1="115" x2="1205" y2="130"/><line x1="1205" y1="115" x2="1190" y2="130"/></g></svg>
<div style="left:516px;top:145px;width:60px;height:762px;background:#fff;border:1px solid #828790;box-sizing:border-box;"></div>
<div style="left:549px;top:146px;width:26px;height:760px;background:#f0f0f0;"></div>
<div style="left:522px;top:149px;width:27px;height:21px;background:#03254c;border:2px solid #8ea6c4;box-sizing:border-box;"></div>
<span class="t" style="left:528.5px;top:151.41px;font-size:13.63px;line-height:17px;color:#b4c8e0;transform:scaleX(0.9152);">00</span>
<svg class="a" style="left:0;top:0" width="1787" height="1001"><g stroke="#c0c0c0" stroke-width="2.8" fill="none"><polyline points="556,166 561.5,160 567,166"/><polyline points="556,888 561.5,894 567,888"/></g></svg>
<div style="left:580px;top:149px;width:238px;height:25px;background:#000;"></div>
<span class="t" style="left:826.0px;top:151.30px;font-size:17.44px;line-height:22px;color:#000;transform:scaleX(0.8568);">Name</span>
<div style="left:868px;top:149px;width:286px;height:25px;background:#fff;border:1px solid #7a7a7a;box-sizing:border-box;"></div>
<span class="t" style="left:871.0px;top:151.30px;font-size:17.44px;line-height:22px;color:#000;transform:scaleX(0.8493);">Jig</span>
<div style="left:1156px;top:157.1px;width:15px;height:7.8px;background:#990000;border-radius:2.4px;border:0.6px solid #6a0000;box-sizing:border-box"></div>
<div style="left:1155px;top:156.1px;width:8px;height:9.8px;background:#e6dcdc;border-radius:2.8px;border:1.2px solid #000;box-sizing:border-box"></div>
<span class="t" style="left:1180.5px;top:151.30px;font-size:17.44px;line-height:22px;color:#000;transform:scaleX(0.9231);">Output</span>
<div style="left:687px;top:201px;width:446px;height:1px;background:#b9b9b9;"></div>
<div style="left:580px;top:178px;width:107px;height:24px;background:#fff;border:1px solid #e0e0e0;border-bottom:none;box-sizing:border-box;"></div>
<div style="left:598px;top:181px;width:24px;height:21px;background:#fff;border:1.5px solid #000;border-bottom:none;box-sizing:border-box;"></div>
<span class="t" style="left:626.5px;top:184.80px;font-size:17.44px;line-height:22px;color:#000;transform:scaleX(0.8912);">1 Line</span>
<div style="left:1135px;top:176px;width:29px;height:28px;background:#e1e1e1;border:1px solid #adadad;box-sizing:border-box;"></div>
<div style="left:1167px;top:176px;width:29px;height:28px;background:#e1e1e1;border:1px solid #adadad;box-sizing:border-box;"></div>
<div style="left:1199px;top:176px;width:29px;height:28px;background:#cccccc;border:1px solid #c2c2c2;box-sizing:border-box;"></div>
<svg class="a" style="left:0;top:0" width="1787" height="1001" ><circle cx="1149.2" cy="189.9" r="10.6" fill="none" stroke="#000" stroke-width="2.7"/><path d="M1143.2,189.9 H1155.2 M1149.2,183.9 V195.9" stroke="#000" stroke-width="3.6"/><path d="M1179,196 H1173.2 Q1170.7,196 1170.7,193.5 V182 Q1170.7,179.5 1173.2,179.5 H1178 L1181.2,182.6" fill="none" stroke="#000" stroke-width="2.4"/><path d="M1173.2,186.6 H1178.5 M1173.2,189.7 H1178.5 M1173.2,192.8 H1178.5" stroke="#000" stroke-width="1.6"/><path d="M1182.7,184.2 H1187.3 L1191.5,188.4 V197.4 Q1191.5,199.9 1189,199.9 H1182.7 Q1180.2,199.9 1180.2,197.4 V186.7 Q1180.2,184.2 1182.7,184.2 Z" fill="#e1e1e1" stroke="#000" stroke-width="2.4"/><path d="M1186.8,183.6 L1192,188.8 H1186.8 Z" fill="#000"/><path d="M1182.8,191.2 H1189 M1182.8,194 H1187.4 M1182.8,196.8 H1189" stroke="#000" stroke-width="1.6"/><circle cx="1213.2" cy="189.9" r="10.6" fill="none" stroke="#6e6e6e" stroke-width="2.7"/><path d="M1207,189.9 H1219.4" stroke="#6e6e6e" stroke-width="3.6"/></svg>
<span class="t" style="left:585.0px;top:208.30px;font-size:17.44px;line-height:22px;color:#000;transform:scaleX(0.8806);">Sub-Layer Name</span>
<div style="left:703px;top:206px;width:188px;height:25px;background:#fff;border:1px solid #7a7a7a;box-sizing:border-box;"></div>
<div style="left:1080px;top:214.1px;width:15px;height:7.8px;background:#808080;border-radius:2.4px;border:0.6px solid #666;box-sizing:border-box"></div>
<div style="left:1087px;top:213.1px;width:8px;height:9.8px;background:#dcdcdc;border-radius:2.8px;border:1.2px solid #555;box-sizing:border-box"></div>
<span class="t" style="left:1104.5px;top:208.30px;font-size:17.44px;line-height:22px;color:#8a8a8a;transform:scaleX(0.8975);">Output Sub-Layer</span>
<span class="t" style="left:835.0px;top:237.30px;font-size:17.44px;line-height:22px;color:#000;transform:scaleX(0.9277);">Speed (mm/min)</span>
<div style="left:957px;top:236px;width:179px;height:23px;background:#fff;border:1px solid #7a7a7a;box-sizing:border-box;"></div>
<div style="left:1120px;top:238px;width:14px;height:19px;background:#f3f3f3;border:1px solid #c8c8c8;box-sizing:border-box;"></div>
<svg class="a" style="left:0;top:0" width="1787" height="1001"><polygon points="1122.3,246.2 1131.7,246.2 1127.0,240.89999999999998" fill="#000"/><polygon points="1122.3,249.2 1131.7,249.2 1127.0,254.5" fill="#000"/></svg>
<span class="t" style="left:961.0px;top:237.30px;font-size:17.44px;line-height:22px;color:#000;transform:scaleX(0.8989);">1500</span>
<span class="t" style="left:846.0px;top:261.80px;font-size:17.44px;line-height:22px;color:#000;transform:scaleX(0.9113);">Max Power (%)</span>
<div style="left:957px;top:260px;width:179px;height:23px;background:#fff;border:1px solid #7a7a7a;box-sizing:border-box;"></div>
<div style="left:1120px;top:262px;width:14px;height:19px;background:#f3f3f3;border:1px solid #c8c8c8;box-sizing:border-box;"></div>
<svg class="a" style="left:0;top:0" width="1787" height="1001"><polygon points="1122.3,270.2 1131.7,270.2 1127.0,264.9" fill="#000"/><polygon points="1122.3,273.2 1131.7,273.2 1127.0,278.5" fill="#000"/></svg>
<span class="t" style="left:961.0px;top:261.30px;font-size:17.44px;line-height:22px;color:#000;transform:scaleX(0.9153);">100.00</span>
<div style="left:1138px;top:268.1px;width:15px;height:7.8px;background:#00dd00;border-radius:2.4px;border:0.6px solid #0a8a0a;box-sizing:border-box"></div>
<div style="left:1145px;top:267.1px;width:8px;height:9.8px;background:#e8f0e8;border-radius:2.8px;border:1.2px solid #000;box-sizing:border-box"></div>
<span class="t" style="left:1163.0px;top:261.80px;font-size:17.44px;line-height:22px;color:#000;transform:scaleX(0.9172);">Air Assist</span>
<div style="left:958px;top:293.6px;width:15px;height:7.8px;background:#990000;border-radius:2.4px;border:0.6px solid #6a0000;box-sizing:border-box"></div>
<div style="left:957px;top:292.6px;width:8px;height:9.8px;background:#e6dcdc;border-radius:2.8px;border:1.2px solid #000;box-sizing:border-box"></div>
<span class="t" style="left:982.5px;top:287.30px;font-size:17.44px;line-height:22px;color:#000;transform:scaleX(0.8864);">Constant Power Mode</span>
<span class="t" style="left:918.0px;top:312.30px;font-size:17.44px;line-height:22px;color:#000;transform:scaleX(0.8451);">Mode</span>
<div style="left:957px;top:310px;width:179px;height:25px;background:#e1e1e1;border:1px solid #adadad;box-sizing:border-box;"></div>
<span class="t" style="left:961.0px;top:312.30px;font-size:17.44px;line-height:22px;color:#000;transform:scaleX(0.8764);">Line</span>
<svg class="a" style="left:1115px;top:317.5px" width="14" height="10"><polyline points="1.5,2.5 7,8 12.5,2.5" fill="none" stroke="#444" stroke-width="1.2"/></svg>
<div style="left:583px;top:364px;width:641px;height:400px;border:1px solid #d9d9d9;box-sizing:border-box;"></div>
<div style="left:584px;top:763px;width:639px;height:1px;background:#fff;"></div>
<div style="left:1222px;top:366px;width:1px;height:397px;background:#fff;"></div>
<div style="left:684px;top:340px;width:102px;height:25px;background:#f0f0f0;border:1px solid #d9d9d9;box-sizing:border-box;"></div>
<div style="left:583px;top:338px;width:102px;height:28px;background:#fff;border:1px solid #d9d9d9;border-bottom:none;box-sizing:border-box;"></div>
<span class="t" style="left:600.5px;top:341.80px;font-size:17.44px;line-height:22px;color:#000;transform:scaleX(0.8944);">Common</span>
<span class="t" style="left:702.0px;top:343.30px;font-size:17.44px;line-height:22px;color:#000;transform:scaleX(0.8735);">Advanced</span>
<span class="t" style="left:820.0px;top:367.30px;font-size:17.44px;line-height:22px;color:#000;transform:scaleX(0.8752);">Number of Passes</span>
<div style="left:949px;top:366px;width:91px;height:23px;background:#fff;border:1px solid #7a7a7a;box-sizing:border-box;"></div>
<div style="left:1024px;top:368px;width:14px;height:19px;background:#f3f3f3;border:1px solid #c8c8c8;box-sizing:border-box;"></div>
<svg class="a" style="left:0;top:0" width="1787" height="1001"><polygon points="1026.3,376.2 1035.7,376.2 1031.0,370.9" fill="#000"/><polygon points="1026.3,379.2 1035.7,379.2 1031.0,384.5" fill="#000"/></svg>
<span class="t" style="left:953.0px;top:367.30px;font-size:17.44px;line-height:22px;color:#000;transform:scaleX(0.9141);">1</span>
<span class="t" style="left:846.0px;top:391.30px;font-size:17.44px;line-height:22px;color:#000;transform:scaleX(0.9294);">Z Offset (mm)</span>
<div style="left:949px;top:390px;width:91px;height:23px;background:#fff;border:1px solid #7a7a7a;box-sizing:border-box;"></div>
<div style="left:1024px;top:392px;width:14px;height:19px;background:#f3f3f3;border:1px solid #c8c8c8;box-sizing:border-box;"></div>
<svg class="a" style="left:0;top:0" width="1787" height="1001"><polygon points="1026.3,400.2 1035.7,400.2 1031.0,394.9" fill="#000"/><polygon points="1026.3,403.2 1035.7,403.2 1031.0,408.5" fill="#000"/></svg>
<span class="t" style="left:953.0px;top:391.30px;font-size:17.44px;line-height:22px;color:#000;transform:scaleX(0.8806);">0.00</span>
<span class="t" style="left:795.0px;top:415.80px;font-size:17.44px;line-height:22px;color:#000;transform:scaleX(0.9080);">Z step per pass (mm)</span>
<div style="left:949px;top:414px;width:91px;height:23px;background:#fff;border:1px solid #7a7a7a;box-sizing:border-box;"></div>
<div style="left:1024px;top:416px;width:14px;height:19px;background:#f3f3f3;border:1px solid #c8c8c8;box-sizing:border-box;"></div>
<svg class="a" style="left:0;top:0" width="1787" height="1001"><polygon points="1026.3,424.2 1035.7,424.2 1031.0,418.9" fill="#000"/><polygon points="1026.3,427.2 1035.7,427.2 1031.0,432.5" fill="#000"/></svg>
<span class="t" style="left:953.0px;top:415.30px;font-size:17.44px;line-height:22px;color:#000;transform:scaleX(0.8806);">0.00</span>
<span class="t" style="left:830.0px;top:439.30px;font-size:17.44px;line-height:22px;color:#000;transform:scaleX(0.9270);">Kerf offset (mm)</span>
<div style="left:949px;top:438px;width:91px;height:23px;background:#fff;border:1px solid #0078d7;box-sizing:border-box;"></div>
<div style="left:1024px;top:440px;width:14px;height:19px;background:#f3f3f3;border:1px solid #c8c8c8;box-sizing:border-box;"></div>
<svg class="a" style="left:0;top:0" width="1787" height="1001"><polygon points="1026.3,448.2 1035.7,448.2 1031.0,442.9" fill="#000"/><polygon points="1026.3,451.2 1035.7,451.2 1031.0,456.5" fill="#000"/></svg>
<div style="left:953px;top:441px;width:40px;height:17px;background:#0078d7;"></div>
<span class="t" style="left:953.0px;top:439.30px;font-size:17.44px;line-height:22px;color:#fff;transform:scaleX(0.8904);">0.250</span>
<span class="t" style="left:1109.0px;top:391.30px;font-size:17.44px;line-height:22px;color:#000;transform:scaleX(0.9290);">(none)</span>
<span class="t" style="left:1109.0px;top:415.80px;font-size:17.44px;line-height:22px;color:#000;transform:scaleX(0.9290);">(none)</span>
<span class="t" style="left:1102.2px;top:439.30px;font-size:17.44px;line-height:22px;color:#000;transform:scaleX(0.9147);">Outward</span>
<svg class="a" style="left:0;top:0" width="1787" height="1001" ><defs><filter id="ash" x="-10%" y="-60%" width="120%" height="260%"><feGaussianBlur stdDeviation="1.6"/></filter></defs><path d="M645,442.7 Q642.3,443 642.3,445.6 Q642.3,448.2 645,448.5 L798.5,453.3 L798,458.2 L816,450 L798.6,440.4 L798.6,446.3 Z" fill="#000" opacity="0.38" transform="translate(1.5,3)" filter="url(#ash)"/><path d="M645,442.7 Q642.3,443 642.3,445.6 Q642.3,448.2 645,448.5 L798.5,453.3 L798,458.2 L816,450 L798.6,440.4 L798.6,446.3 Z" fill="#f2434c"/></svg>
<div style="left:584px;top:462px;width:639px;height:1px;background:#a0a0a0;"></div>
<div style="left:584px;top:463px;width:639px;height:1px;background:#fff;"></div>
<span class="t" style="left:801.0px;top:479.30px;font-size:17.44px;line-height:22px;color:#000;transform:scaleX(0.9013);">Perforation Mode</span>
<div style="left:932px;top:485.6px;width:15px;height:7.8px;background:#990000;border-radius:2.4px;border:0.6px solid #6a0000;box-sizing:border-box"></div>
<div style="left:931px;top:484.6px;width:8px;height:9.8px;background:#e6dcdc;border-radius:2.8px;border:1.2px solid #000;box-sizing:border-box"></div>
<div style="left:949px;top:466px;width:91px;height:23px;background:#f0f0f0;border:1px solid #cfcfcf;box-sizing:border-box;"></div>
<div style="left:1024px;top:468px;width:14px;height:19px;background:#f0f0f0;border:1px solid #dcdcdc;box-sizing:border-box;"></div>
<svg class="a" style="left:0;top:0" width="1787" height="1001"><polygon points="1026.3,476.2 1035.7,476.2 1031.0,470.9" fill="#6a6a6a"/><polygon points="1026.3,479.2 1035.7,479.2 1031.0,484.5" fill="#6a6a6a"/></svg>
<span class="t" style="left:953.0px;top:467.30px;font-size:17.44px;line-height:22px;color:#8c8c8c;transform:scaleX(0.8806);">0.10</span>
<div style="left:949px;top:490px;width:91px;height:23px;background:#f0f0f0;border:1px solid #cfcfcf;box-sizing:border-box;"></div>
<div style="left:1024px;top:492px;width:14px;height:19px;background:#f0f0f0;border:1px solid #dcdcdc;box-sizing:border-box;"></div>
<svg class="a" style="left:0;top:0" width="1787" height="1001"><polygon points="1026.3,500.2 1035.7,500.2 1031.0,494.9" fill="#6a6a6a"/><polygon points="1026.3,503.2 1035.7,503.2 1031.0,508.5" fill="#6a6a6a"/></svg>
<span class="t" style="left:953.0px;top:491.30px;font-size:17.44px;line-height:22px;color:#8c8c8c;transform:scaleX(0.8806);">0.10</span>
<span class="t" style="left:1042.5px;top:467.30px;font-size:17.44px;line-height:22px;color:#000;transform:scaleX(0.8629);">Cut</span>
<span class="t" style="left:1042.5px;top:491.80px;font-size:17.44px;line-height:22px;color:#000;transform:scaleX(0.8519);">Skip</span>
<div style="left:584px;top:523px;width:639px;height:237px;border:1px solid #dcdcdc;box-sizing:border-box;"></div>
<div style="left:585px;top:524px;width:637px;height:1px;background:#fff;"></div>
<div style="left:585px;top:524px;width:1px;height:235px;background:#fff;"></div>
<div style="left:584px;top:515px;width:132px;height:18px;background:#f0f0f0;"></div>
<div style="left:585px;top:519.1px;width:15px;height:7.8px;background:#990000;border-radius:2.4px;border:0.6px solid #6a0000;box-sizing:border-box"></div>
<div style="left:584px;top:518.1px;width:8px;height:9.8px;background:#e6dcdc;border-radius:2.8px;border:1.2px solid #000;box-sizing:border-box"></div>
<span class="t" style="left:611.5px;top:513.30px;font-size:17.44px;line-height:22px;color:#000;transform:scaleX(0.9107);">Tabs / Bridges</span>
<span class="t" style="left:825.2px;top:535.30px;font-size:17.44px;line-height:22px;color:#7d7d7d;transform:scaleX(0.9066);">Tab Generation</span>
<div style="left:938.0px;top:535.5px;width:20px;height:20px;border-radius:50%;background:#fff;border:1px solid #c4c4c4;box-sizing:border-box"></div>
<span class="t" style="left:968.0px;top:535.30px;font-size:17.44px;line-height:22px;color:#7d7d7d;transform:scaleX(0.9188);">Automatic</span>
<div style="left:1047.0px;top:535.5px;width:20px;height:20px;border-radius:50%;background:#fff;border:1px solid #c4c4c4;box-sizing:border-box"></div>
<div style="left:1052.5px;top:541.0px;width:9px;height:9px;border-radius:50%;background:#bdbdbd"></div>
<span class="t" style="left:1076.0px;top:535.30px;font-size:17.44px;line-height:22px;color:#7d7d7d;transform:scaleX(0.8536);">Manual</span>
<span class="t" style="left:829.2px;top:560.30px;font-size:17.44px;line-height:22px;color:#7d7d7d;transform:scaleX(0.9264);">Tab Size (mm)</span>
<div style="left:938px;top:560px;width:105px;height:22px;background:#f0f0f0;border:1px solid #cfcfcf;box-sizing:border-box;"></div>
<div style="left:1027px;top:562px;width:14px;height:18px;background:#f0f0f0;border:1px solid #dcdcdc;box-sizing:border-box;"></div>
<svg class="a" style="left:0;top:0" width="1787" height="1001"><polygon points="1029.3,569.7 1038.7,569.7 1034.0,564.4000000000001" fill="#6a6a6a"/><polygon points="1029.3,572.7 1038.7,572.7 1034.0,578.0" fill="#6a6a6a"/></svg>
<span class="t" style="left:942.0px;top:560.80px;font-size:17.44px;line-height:22px;color:#8c8c8c;transform:scaleX(0.8806);">0.50</span>
<span class="t" style="left:811.0px;top:585.30px;font-size:17.44px;line-height:22px;color:#7d7d7d;transform:scaleX(0.8704);">Even Spacing</span>
<div style="left:913.5px;top:585.5px;width:20px;height:20px;border-radius:50%;background:#fff;border:1px solid #c4c4c4;box-sizing:border-box"></div>
<div style="left:919.0px;top:591.0px;width:9px;height:9px;border-radius:50%;background:#bdbdbd"></div>
<div style="left:938px;top:585px;width:105px;height:22px;background:#f0f0f0;border:1px solid #cfcfcf;box-sizing:border-box;"></div>
<div style="left:1027px;top:587px;width:14px;height:18px;background:#f0f0f0;border:1px solid #dcdcdc;box-sizing:border-box;"></div>
<svg class="a" style="left:0;top:0" width="1787" height="1001"><polygon points="1029.3,594.7 1038.7,594.7 1034.0,589.4000000000001" fill="#6a6a6a"/><polygon points="1029.3,597.7 1038.7,597.7 1034.0,603.0" fill="#6a6a6a"/></svg>
<span class="t" style="left:942.0px;top:585.80px;font-size:17.44px;line-height:22px;color:#8c8c8c;transform:scaleX(0.8904);">50.04</span>
<span class="t" style="left:1047.0px;top:585.30px;font-size:17.44px;line-height:22px;color:#7d7d7d;transform:scaleX(0.8696);">Spacing</span>
<span class="t" style="left:795.0px;top:610.30px;font-size:17.44px;line-height:22px;color:#7d7d7d;transform:scaleX(0.8833);">Tabs Per Shape</span>
<div style="left:913.5px;top:610.5px;width:20px;height:20px;border-radius:50%;background:#fff;border:1px solid #c4c4c4;box-sizing:border-box"></div>
<div style="left:938px;top:610px;width:105px;height:22px;background:#f0f0f0;border:1px solid #cfcfcf;box-sizing:border-box;"></div>
<div style="left:1027px;top:612px;width:14px;height:18px;background:#f0f0f0;border:1px solid #dcdcdc;box-sizing:border-box;"></div>
<svg class="a" style="left:0;top:0" width="1787" height="1001"><polygon points="1029.3,619.7 1038.7,619.7 1034.0,614.4000000000001" fill="#6a6a6a"/><polygon points="1029.3,622.7 1038.7,622.7 1034.0,628.0" fill="#6a6a6a"/></svg>
<span class="t" style="left:942.0px;top:610.80px;font-size:17.44px;line-height:22px;color:#8c8c8c;transform:scaleX(0.9141);">1</span>
<span class="t" style="left:1047.0px;top:610.30px;font-size:17.44px;line-height:22px;color:#7d7d7d;transform:scaleX(0.9180);">Min Tabs</span>
<div style="left:803px;top:642.6px;width:15px;height:7.8px;background:#2a2a2a;border-radius:2.4px;border:0.6px solid #222;box-sizing:border-box"></div>
<div style="left:802px;top:641.6px;width:8px;height:9.8px;background:#c6c6c6;border-radius:2.8px;border:1.2px solid #222;box-sizing:border-box"></div>
<span class="t" style="left:827.2px;top:636.30px;font-size:17.44px;line-height:22px;color:#7d7d7d;transform:scaleX(0.9150);">Limit Max Tabs</span>
<div style="left:938px;top:635px;width:105px;height:22px;background:#f0f0f0;border:1px solid #cfcfcf;box-sizing:border-box;"></div>
<div style="left:1027px;top:637px;width:14px;height:18px;background:#f0f0f0;border:1px solid #dcdcdc;box-sizing:border-box;"></div>
<svg class="a" style="left:0;top:0" width="1787" height="1001"><polygon points="1029.3,644.7 1038.7,644.7 1034.0,639.4000000000001" fill="#6a6a6a"/><polygon points="1029.3,647.7 1038.7,647.7 1034.0,653.0" fill="#6a6a6a"/></svg>
<span class="t" style="left:942.0px;top:635.80px;font-size:17.44px;line-height:22px;color:#8c8c8c;transform:scaleX(0.9141);">1</span>
<span class="t" style="left:1047.0px;top:636.30px;font-size:17.44px;line-height:22px;color:#7d7d7d;transform:scaleX(0.8984);">Max Tabs</span>
<span class="t" style="left:829.2px;top:661.30px;font-size:17.44px;line-height:22px;color:#7d7d7d;transform:scaleX(0.9104);">Tab Cut Power</span>
<div style="left:938px;top:660px;width:105px;height:23px;background:#f0f0f0;border:1px solid #cfcfcf;box-sizing:border-box;"></div>
<div style="left:1027px;top:662px;width:14px;height:19px;background:#f0f0f0;border:1px solid #dcdcdc;box-sizing:border-box;"></div>
<svg class="a" style="left:0;top:0" width="1787" height="1001"><polygon points="1029.3,670.2 1038.7,670.2 1034.0,664.9000000000001" fill="#6a6a6a"/><polygon points="1029.3,673.2 1038.7,673.2 1034.0,678.5" fill="#6a6a6a"/></svg>
<span class="t" style="left:942.0px;top:661.30px;font-size:17.44px;line-height:22px;color:#8c8c8c;transform:scaleX(0.9141);">0</span>
<span class="t" style="left:1047.0px;top:661.30px;font-size:17.44px;line-height:22px;color:#7d7d7d;transform:scaleX(0.9444);">% of max power</span>
<div style="left:823px;top:686px;width:110px;height:32px;background:#cccccc;border:1px solid #c4c4c4;box-sizing:border-box;"></div>
<span class="t" style="left:840.5px;top:691.80px;font-size:17.44px;line-height:22px;color:#7d7d7d;transform:scaleX(0.9000);">Clear Tabs</span>
<div style="left:939px;top:698.6px;width:15px;height:7.8px;background:#2a2a2a;border-radius:2.4px;border:0.6px solid #222;box-sizing:border-box"></div>
<div style="left:938px;top:697.6px;width:8px;height:9.8px;background:#c6c6c6;border-radius:2.8px;border:1.2px solid #222;box-sizing:border-box"></div>
<span class="t" style="left:963.0px;top:692.30px;font-size:17.44px;line-height:22px;color:#7d7d7d;transform:scaleX(0.8915);">Skip Inner Shapes</span>
<div style="left:517px;top:917px;width:121px;height:32px;background:#e1e1e1;border:1px solid #adadad;box-sizing:border-box;"></div>
<span class="t" style="left:521.5px;top:922.80px;font-size:17.44px;line-height:22px;color:#000;transform:scaleX(0.8925);">Reset to Default</span>
<div style="left:649px;top:917px;width:110px;height:32px;background:#e1e1e1;border:1px solid #adadad;box-sizing:border-box;"></div>
<span class="t" style="left:658.5px;top:922.80px;font-size:17.44px;line-height:22px;color:#000;transform:scaleX(0.8825);">Make Default</span>
<div style="left:770px;top:917px;width:149px;height:32px;background:#e1e1e1;border:1px solid #adadad;box-sizing:border-box;"></div>
<span class="t" style="left:774.5px;top:922.80px;font-size:17.44px;line-height:22px;color:#000;transform:scaleX(0.9226);">Make Default for All</span>
<div style="left:1000px;top:917px;width:110px;height:32px;background:#e1e1e1;border:2px solid #0078d7;box-sizing:border-box;"></div>
<span class="t" style="left:1044.0px;top:922.80px;font-size:17.44px;line-height:22px;color:#000;transform:scaleX(0.8701);">OK</span>
<div style="left:1121px;top:917px;width:110px;height:32px;background:#e1e1e1;border:1px solid #adadad;box-sizing:border-box;"></div>
<span class="t" style="left:1153.5px;top:922.80px;font-size:17.44px;line-height:22px;color:#000;transform:scaleX(0.8260);">Cancel</span>
<svg class="a" style="left:0;top:0" width="1787" height="1001"><path d="M1359.3,283.1 L1359.3,306.7 L1364.5,302.2 L1368.1,309.6 L1372.8,307.6 L1369.4,301.3 L1376.9,300.8 Z" fill="#fff" stroke="#101828" stroke-width="1.1" stroke-linejoin="miter"/></svg>
</div></body></html>
